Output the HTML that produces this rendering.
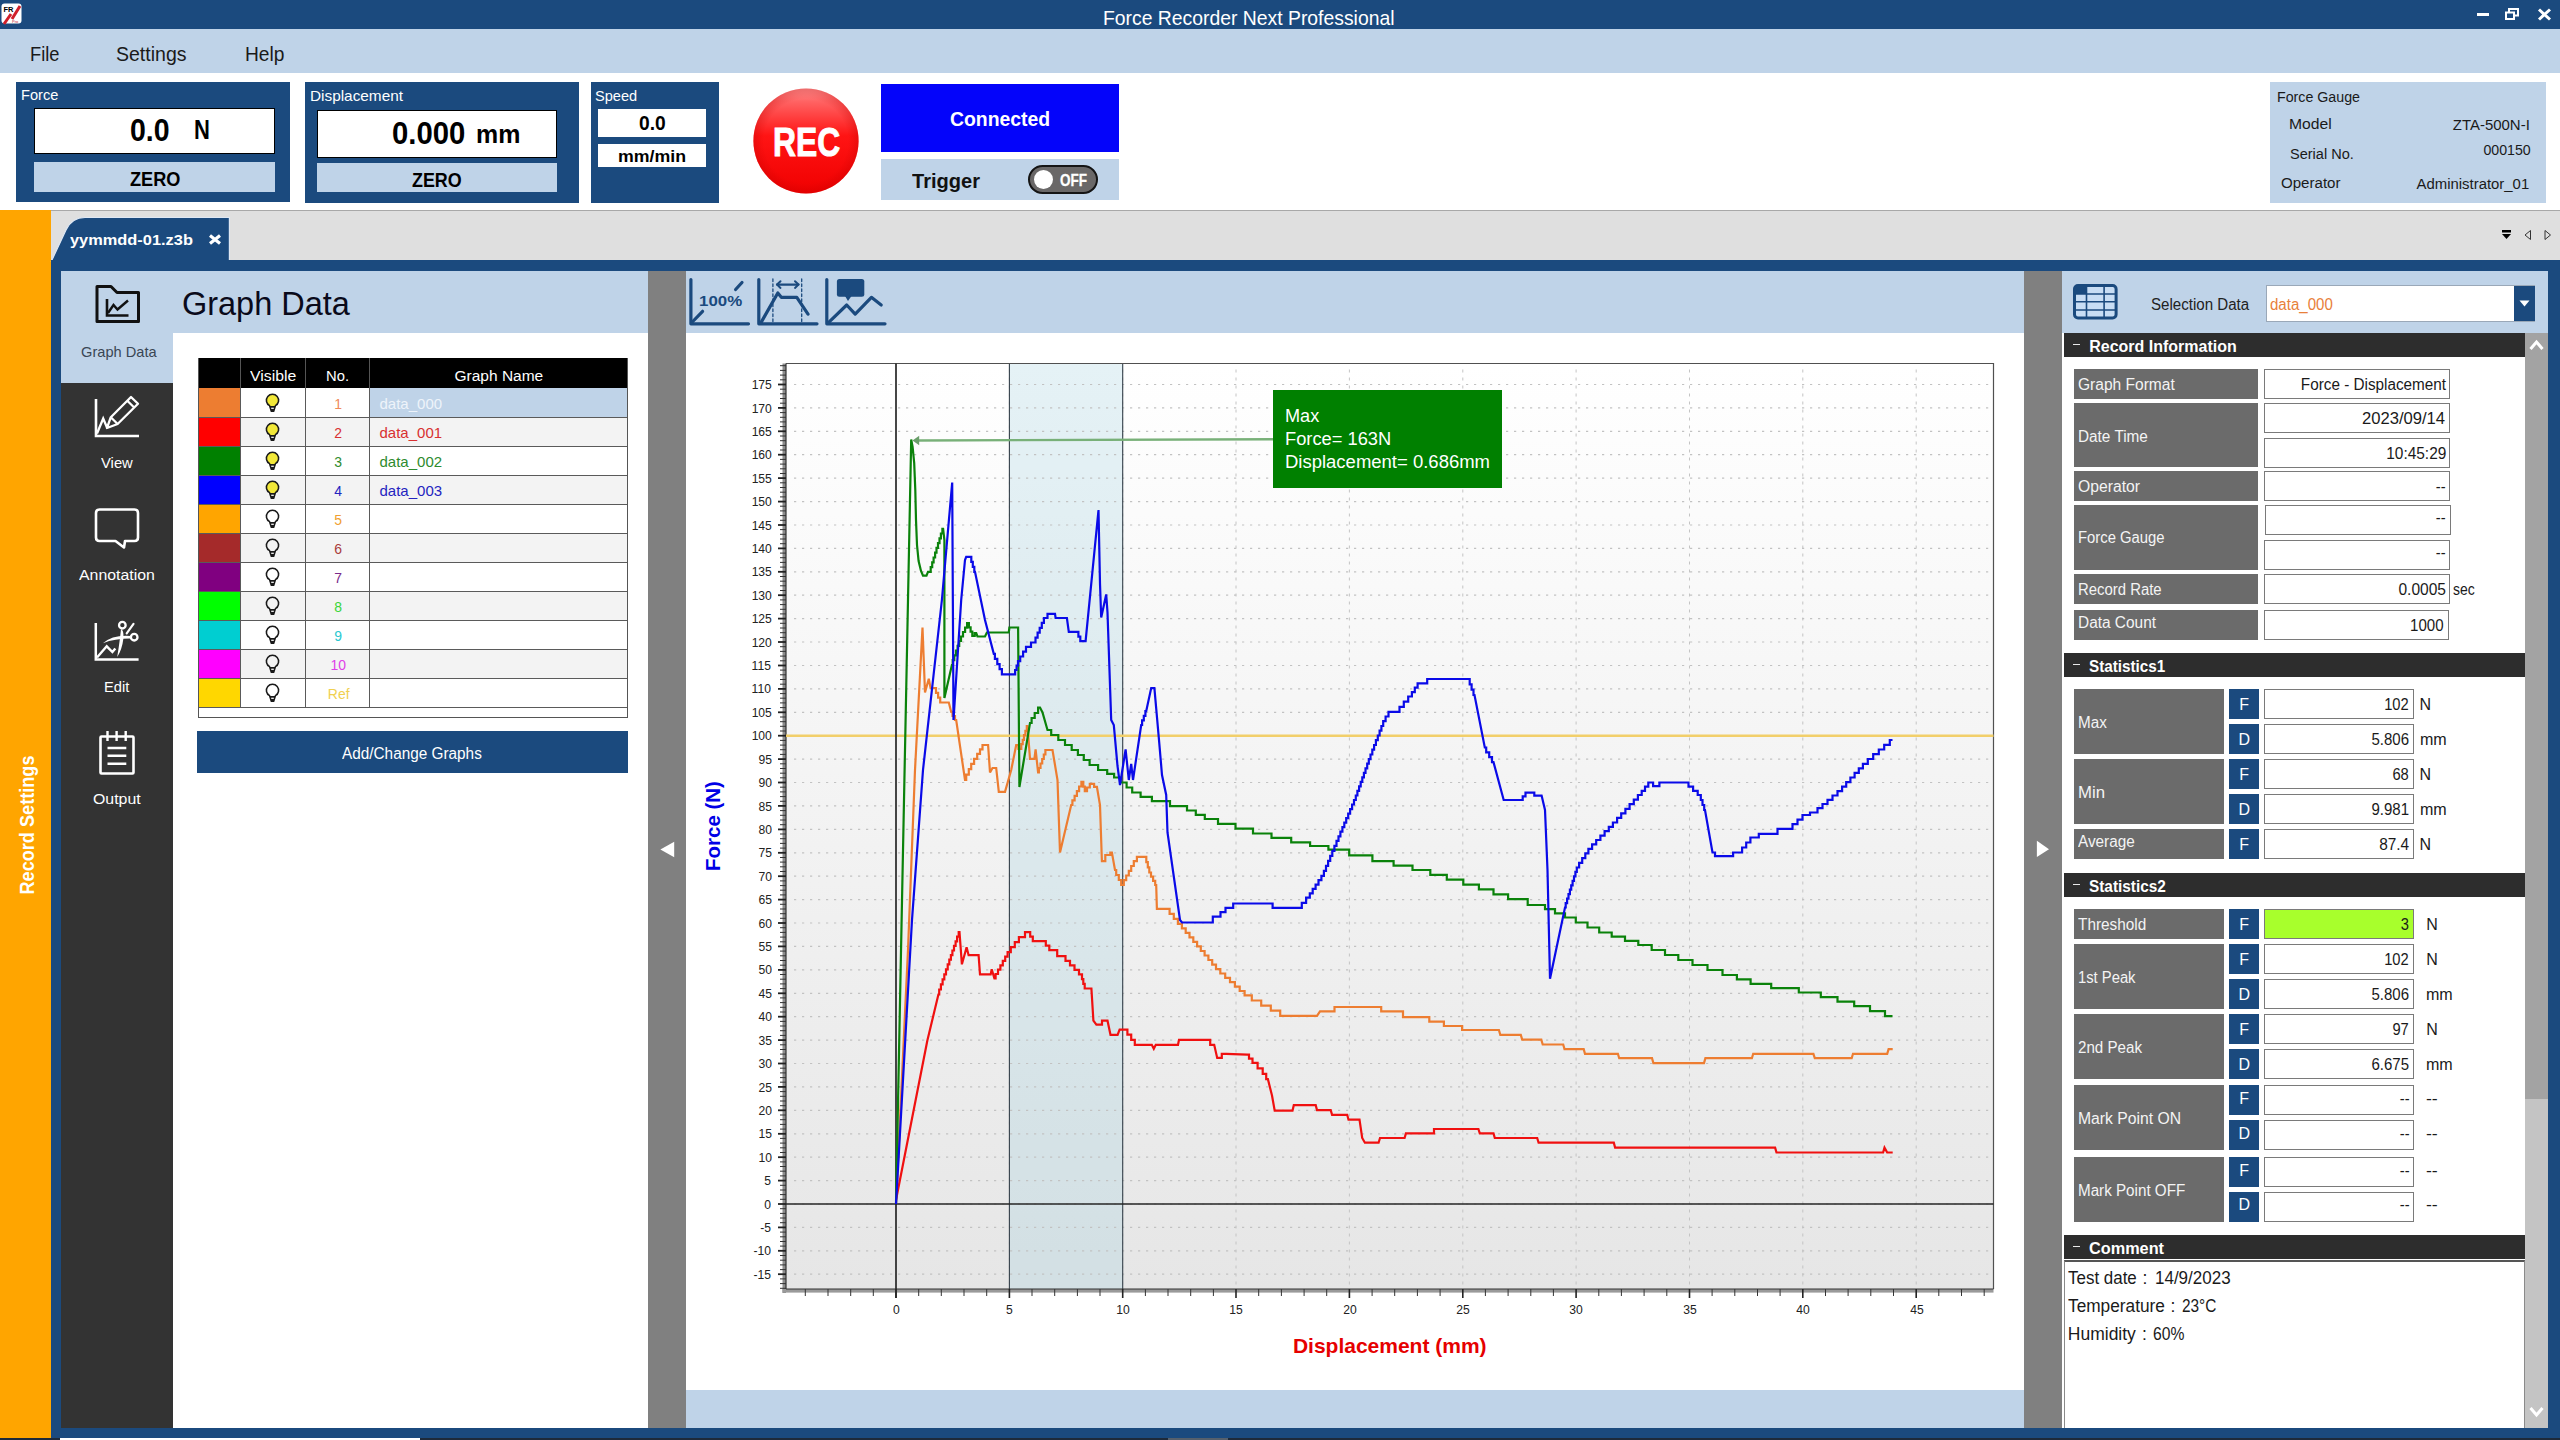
<!DOCTYPE html>
<html><head><meta charset="utf-8">
<style>
*{margin:0;padding:0;box-sizing:border-box}
html,body{width:2560px;height:1440px;overflow:hidden;background:#fff;font-family:"Liberation Sans",sans-serif;color:#000}
.a{position:absolute}
.t{position:absolute;white-space:nowrap}
svg{position:absolute;overflow:visible}
</style></head><body>
<div class="a" style="left:0px;top:0px;width:2560px;height:29px;background:#1b4a7e;"></div>
<div class="a" style="left:0px;top:29px;width:2560px;height:44px;background:#bfd3e8;"></div>
<div class="a" style="left:51px;top:211px;width:2509px;height:49px;background:#dfdfdf;"></div>
<div class="a" style="left:0px;top:210px;width:2560px;height:1px;background:#a8a8a8;"></div>
<div class="a" style="left:0px;top:210px;width:51px;height:1230px;background:#ffa500;"></div>
<div class="a" style="left:51px;top:260px;width:2509px;height:1178px;background:#1b4a7e;"></div>
<div class="a" style="left:60px;top:1438px;width:360px;height:2px;background:#ffffff;"></div>
<div class="a" style="left:420px;top:1438px;width:2140px;height:2px;background:#1e2a3a;"></div>
<div class="a" style="left:0px;top:1438px;width:60px;height:2px;background:#1e2a3a;"></div>
<div class="a" style="left:1168px;top:1438px;width:60px;height:2px;background:#56606c;"></div>
<div class="a" style="left:61px;top:271px;width:112px;height:1157px;background:#333333;"></div>
<div class="a" style="left:61px;top:271px;width:112px;height:112px;background:#bfd3e8;"></div>
<div class="a" style="left:173px;top:271px;width:475px;height:62px;background:#bfd3e8;"></div>
<div class="a" style="left:173px;top:333px;width:475px;height:1095px;background:#fff;"></div>
<div class="a" style="left:648px;top:271px;width:38px;height:1157px;background:#808080;"></div>
<div class="a" style="left:686px;top:271px;width:1338px;height:62px;background:#bfd3e8;"></div>
<div class="a" style="left:686px;top:333px;width:1338px;height:1057px;background:#fff;"></div>
<div class="a" style="left:686px;top:1390px;width:1338px;height:38px;background:#bfd3e8;"></div>
<div class="a" style="left:2024px;top:271px;width:38px;height:1157px;background:#808080;"></div>
<div class="a" style="left:2062px;top:271px;width:486px;height:62px;background:#bfd3e8;"></div>
<div class="a" style="left:2062px;top:333px;width:486px;height:1095px;background:#fff;"></div>
<div class="t" style="left:1102.80px;top:7.12px;font-size:21px;line-height:21px;color:#fff;transform:scaleX(0.9216);transform-origin:left;">Force Recorder Next Professional</div>
<div class="a" style="left:2477px;top:13px;width:12px;height:3px;background:#fff;"></div>
<svg style="left:2505px;top:8px" width="14" height="12" viewBox="0 0 14 12"><rect x="1" y="4.5" width="8" height="6.5" fill="none" stroke="#fff" stroke-width="2"/><path d="M4 4.5V1h9v6.5H9" fill="none" stroke="#fff" stroke-width="2"/></svg>
<svg style="left:2538px;top:9px" width="13" height="11" viewBox="0 0 13 11"><path d="M1 0.5L12 10.5M12 0.5L1 10.5" stroke="#fff" stroke-width="3"/></svg>
<svg style="left:1px;top:3px" width="21" height="22" viewBox="0 0 21 22"><rect x="0.5" y="0.5" width="20" height="20" rx="3" fill="#fff"/><text x="2.5" y="9" font-size="7.5" font-weight="700" font-family="Liberation Sans">FR</text><path d="M3 21L10 11M11 16L19 3" stroke="#d0202a" stroke-width="3"/><text x="11" y="20" font-size="4" fill="#c02030" font-family="Liberation Sans">Pro</text></svg>
<div class="t" style="left:29.50px;top:43.67px;font-size:20px;line-height:20px;color:#1a1a1a;transform:scaleX(0.9154);transform-origin:left;">File</div>
<div class="t" style="left:115.50px;top:43.67px;font-size:20px;line-height:20px;color:#1a1a1a;transform:scaleX(0.9756);transform-origin:left;">Settings</div>
<div class="t" style="left:244.50px;top:43.67px;font-size:20px;line-height:20px;color:#1a1a1a;transform:scaleX(0.9603);transform-origin:left;">Help</div>
<div class="a" style="left:16px;top:82px;width:274px;height:120px;background:#1b4a7e;"></div>
<div class="t" style="left:20.80px;top:86.60px;font-size:15px;line-height:15px;color:#fff;transform:scaleX(0.9728);transform-origin:left;">Force</div>
<div class="a" style="left:34px;top:108px;width:241px;height:46px;background:#fff;border:1.5px solid #000;"></div>
<div class="t" style="left:130.10px;top:114.78px;font-size:30.5px;line-height:30.5px;font-weight:700;color:#000;transform:scaleX(0.9340);transform-origin:left;">0.0</div>
<div class="t" style="left:194.40px;top:116.84px;font-size:27px;line-height:27px;font-weight:700;color:#000;transform:scaleX(0.8154);transform-origin:left;">N</div>
<div class="a" style="left:34px;top:162px;width:241px;height:30px;background:#bfd3e8;"></div>
<div class="t" style="left:129.50px;top:169.99px;font-size:19.5px;line-height:19.5px;font-weight:700;color:#000;transform:scaleX(0.9304);transform-origin:left;">ZERO</div>
<div class="a" style="left:305px;top:82px;width:274px;height:121px;background:#1b4a7e;"></div>
<div class="t" style="left:310.00px;top:87.80px;font-size:15px;line-height:15px;color:#fff;transform:scaleX(1.0234);transform-origin:left;">Displacement</div>
<div class="a" style="left:317px;top:110px;width:240px;height:48px;background:#fff;border:1.5px solid #000;"></div>
<div class="t" style="left:391.90px;top:117.68px;font-size:30.5px;line-height:30.5px;font-weight:700;color:#000;transform:scaleX(0.9604);transform-origin:left;">0.000</div>
<div class="t" style="left:476.10px;top:121.07px;font-size:26.5px;line-height:26.5px;font-weight:700;color:#000;transform:scaleX(0.9400);transform-origin:left;">mm</div>
<div class="a" style="left:317px;top:163px;width:240px;height:29px;background:#bfd3e8;"></div>
<div class="t" style="left:411.60px;top:170.69px;font-size:19.5px;line-height:19.5px;font-weight:700;color:#000;transform:scaleX(0.9175);transform-origin:left;">ZERO</div>
<div class="a" style="left:591px;top:82px;width:128px;height:121px;background:#1b4a7e;"></div>
<div class="t" style="left:594.60px;top:87.60px;font-size:15px;line-height:15px;color:#fff;transform:scaleX(0.9729);transform-origin:left;">Speed</div>
<div class="a" style="left:598px;top:109px;width:108px;height:28px;background:#fff;"></div>
<div class="t" style="left:638.60px;top:113.59px;font-size:19.5px;line-height:19.5px;font-weight:700;color:#000;transform:scaleX(0.9850);transform-origin:left;">0.0</div>
<div class="a" style="left:598px;top:144px;width:108px;height:23px;background:#fff;"></div>
<div class="t" style="left:617.50px;top:147.53px;font-size:16.5px;line-height:16.5px;font-weight:700;color:#000;transform:scaleX(1.0749);transform-origin:left;">mm/min</div>
<svg style="left:752px;top:86px" width="108" height="110" viewBox="0 0 108 110">
<defs><linearGradient id="rg" x1="0" y1="0" x2="0" y2="1"><stop offset="0" stop-color="#ff9a9a"/><stop offset="0.12" stop-color="#ff6464"/><stop offset="0.45" stop-color="#ff1414"/><stop offset="1" stop-color="#f00000"/></linearGradient>
<radialGradient id="edge" cx="0.5" cy="0.5" r="0.5"><stop offset="0.8" stop-color="#c00000" stop-opacity="0"/><stop offset="1" stop-color="#c00000" stop-opacity="0.3"/></radialGradient></defs>
<circle cx="54" cy="55" r="52.6" fill="url(#rg)"/>
<circle cx="54" cy="55" r="52.6" fill="url(#edge)"/>
</svg>
<div class="t" style="left:772.50px;top:122.14px;font-size:40px;line-height:40px;font-weight:700;color:#fff;transform:scaleX(0.7945);transform-origin:left;-webkit-text-stroke:1px #fff;">REC</div>
<div class="a" style="left:881px;top:84px;width:238px;height:68px;background:#0404fa;"></div>
<div class="t" style="left:949.70px;top:109.47px;font-size:20px;line-height:20px;font-weight:700;color:#fff;transform:scaleX(0.9696);transform-origin:left;">Connected</div>
<div class="a" style="left:881px;top:159px;width:238px;height:41px;background:#bfd3e8;"></div>
<div class="t" style="left:912.00px;top:170.67px;font-size:20px;line-height:20px;font-weight:700;color:#111;transform:scaleX(1.0031);transform-origin:left;">Trigger</div>
<div class="a" style="left:1028px;top:165px;width:70px;height:29px;background:#6a6868;border:2.5px solid #151515;border-radius:15px;"></div>
<div class="a" style="left:1034px;top:170px;width:19.2px;height:19.2px;border-radius:50%;background:#fff"></div>
<div class="t" style="left:1060.20px;top:172.43px;font-size:16.5px;line-height:16.5px;font-weight:700;color:#fff;transform:scaleX(0.8184);transform-origin:left;-webkit-text-stroke:0.3px #fff;">OFF</div>
<div class="a" style="left:2270px;top:82px;width:276px;height:121px;background:#bfd3e8;"></div>
<div class="t" style="left:2277.40px;top:88.58px;font-size:15.5px;line-height:15.5px;color:#1a1a1a;transform:scaleX(0.9175);transform-origin:left;">Force Gauge</div>
<div class="t" style="left:2288.60px;top:116.48px;font-size:15.5px;line-height:15.5px;color:#1a1a1a;transform:scaleX(1.0114);transform-origin:left;">Model</div>
<div class="t" style="left:2449.59px;top:117.28px;font-size:15.5px;line-height:15.5px;color:#1a1a1a;transform:scaleX(0.9648);transform-origin:right;">ZTA-500N-I</div>
<div class="t" style="left:2290.40px;top:146.28px;font-size:15.5px;line-height:15.5px;color:#1a1a1a;transform:scaleX(0.9375);transform-origin:left;">Serial No.</div>
<div class="t" style="left:2478.78px;top:142.08px;font-size:15.5px;line-height:15.5px;color:#1a1a1a;transform:scaleX(0.9145);transform-origin:right;">000150</div>
<div class="t" style="left:2280.50px;top:175.08px;font-size:15.5px;line-height:15.5px;color:#1a1a1a;transform:scaleX(0.9727);transform-origin:left;">Operator</div>
<div class="t" style="left:2411.83px;top:176.08px;font-size:15.5px;line-height:15.5px;color:#1a1a1a;transform:scaleX(0.9610);transform-origin:right;">Administrator_01</div>
<svg style="left:51px;top:216px" width="180" height="46" viewBox="0 0 180 46"><path d="M0.5 45 L15 14 Q21 1.5 34 1.5 L178.4 1.5 L178.4 45 Z" fill="#1b4a7e" stroke="#dfe8f4" stroke-width="1.2"/><rect x="0" y="44" width="180" height="2" fill="#1b4a7e"/></svg>
<div class="t" style="left:70.00px;top:232.96px;font-size:14.7px;line-height:14.7px;font-weight:700;color:#fff;transform:scaleX(1.1153);transform-origin:left;">yymmdd-01.z3b</div>
<svg style="left:208px;top:234px" width="14" height="11" viewBox="0 0 14 11"><path d="M2 1.5L12 9.5M12 1.5L2 9.5" stroke="#fff" stroke-width="3.2"/></svg>
<svg style="left:2500px;top:229px" width="12" height="12" viewBox="0 0 12 12"><rect x="2" y="1" width="9" height="2.5" fill="#000"/><path d="M2 5H11L6.5 10Z" fill="#000"/></svg>
<svg style="left:2522px;top:229px" width="10" height="12" viewBox="0 0 10 12"><path d="M8.5 1.5V10.5L3 6Z" fill="none" stroke="#333" stroke-width="1"/></svg>
<svg style="left:2543px;top:229px" width="10" height="12" viewBox="0 0 10 12"><path d="M2 1.5V10.5L7.5 6Z" fill="none" stroke="#333" stroke-width="1"/></svg>
<svg style="left:90px;top:282px" width="56" height="46" viewBox="90 282 56 46">
<path d="M97 286.5 H111 L117 292.5 H138.5 V321.5 H97 Z" fill="none" stroke="#111" stroke-width="3" stroke-linejoin="round"/>
<path d="M107 299 V315.5 H128.5" fill="none" stroke="#111" stroke-width="2.6"/>
<path d="M108 313 L113.5 305 L117.5 309.5 L128 300.5" fill="none" stroke="#111" stroke-width="2.4"/>
</svg>
<div class="t" style="left:80.60px;top:343.90px;font-size:15px;line-height:15px;color:#3a4654;transform:scaleX(0.9750);transform-origin:left;">Graph Data</div>
<svg style="left:90px;top:395px" width="56" height="46" viewBox="90 395 56 46">
<path d="M96 399 V436 H139" fill="none" stroke="#fff" stroke-width="2.6"/>
<path d="M97 433.5 L103.2 418.5 L107.2 428" fill="none" stroke="#fff" stroke-width="2.3"/>
<path d="M107 428 L110.8 417.2 L131 397 L138 403.8 L117.6 424 Z M110.8 417.2 L117.6 424 M127.3 400.7 L134.2 407.5" fill="none" stroke="#fff" stroke-width="2.3" stroke-linejoin="round"/>
</svg>
<div class="t" style="left:101.00px;top:454.88px;font-size:15.5px;line-height:15.5px;color:#fff;transform:scaleX(0.9545);transform-origin:left;">View</div>
<svg style="left:90px;top:504px" width="56" height="48" viewBox="90 504 56 48">
<path d="M99.5 509.5 H134.5 Q138 509.5 138 513 V537.5 Q138 541 134.5 541 H125 L124 547.5 L115.5 541 H99.5 Q96 541 96 537.5 V513 Q96 509.5 99.5 509.5 Z" fill="none" stroke="#fff" stroke-width="2.6" stroke-linejoin="round"/>
</svg>
<div class="t" style="left:79.40px;top:567.08px;font-size:15.5px;line-height:15.5px;color:#fff;transform:scaleX(1.0227);transform-origin:left;">Annotation</div>
<svg style="left:90px;top:618px" width="56" height="46" viewBox="90 618 56 46">
<path d="M95.8 623 V659.5 H138.6" fill="none" stroke="#fff" stroke-width="2.5"/>
<path d="M97 657.5 L106.7 646.3 L112.4 652 L115.3 648.4" fill="none" stroke="#fff" stroke-width="2.4" stroke-linejoin="miter"/>
<circle cx="122.35" cy="625.2" r="3.3" fill="none" stroke="#fff" stroke-width="2.3"/>
<circle cx="134.2" cy="637.2" r="3.3" fill="none" stroke="#fff" stroke-width="2.3"/>
<path d="M102.9 643.2 Q113 634.5 131 636 L131 638.6 Q115 638.5 102.9 643.2 Z" fill="#fff"/>
<path d="M121 629 Q123.8 630 123.5 638 Q122 650 117.2 656.9 Q119 646 120 638 Z" fill="#fff"/>
<path d="M126.7 633.3 L133.5 623.9" stroke="#fff" stroke-width="2.2" stroke-linecap="round"/>
</svg>
<div class="t" style="left:104.40px;top:678.68px;font-size:15.5px;line-height:15.5px;color:#fff;transform:scaleX(0.9472);transform-origin:left;">Edit</div>
<svg style="left:90px;top:728px" width="56" height="50" viewBox="90 728 56 50">
<rect x="100.5" y="736.5" width="33" height="37" rx="1" fill="none" stroke="#fff" stroke-width="2.6"/>
<path d="M107.5 731V741M116.6 731V741M125.7 731V741" stroke="#fff" stroke-width="2.4"/>
<path d="M107.5 748H126.3M107.5 755.8H126.3M107.5 763.7H126.3" stroke="#fff" stroke-width="2.4"/>
</svg>
<div class="t" style="left:93.30px;top:791.38px;font-size:15.5px;line-height:15.5px;color:#fff;transform:scaleX(1.0251);transform-origin:left;">Output</div>
<div class="t" style="left:28px;top:824.6px;font-size:19.5px;line-height:19.5px;font-weight:700;color:#fff;transform:translate(-50%,-50%) rotate(-90deg) scaleX(0.93);">Record Settings</div>
<div class="t" style="left:181.90px;top:285.82px;font-size:34px;line-height:34px;color:#0a0a1a;transform:scaleX(0.9547);transform-origin:left;">Graph Data</div>
<div class="a" style="left:198px;top:358px;width:430px;height:30px;background:#000;"></div>
<div class="a" style="left:198px;top:388px;width:430px;height:330px;background:#fff;border:1px solid #555;border-top:none;"></div>
<div class="a" style="left:199px;top:388px;width:428px;height:29px;background:#ffffff;"></div>
<div class="a" style="left:199px;top:388px;width:41px;height:29px;background:#ed7d31;"></div>
<div class="a" style="left:370px;top:388px;width:257px;height:29px;background:#bfd3e8;"></div>
<div class="a" style="left:199px;top:417px;width:428px;height:29px;background:#f3f3f3;"></div>
<div class="a" style="left:199px;top:417px;width:41px;height:29px;background:#ff0000;"></div>
<div class="a" style="left:199px;top:446px;width:428px;height:29px;background:#ffffff;"></div>
<div class="a" style="left:199px;top:446px;width:41px;height:29px;background:#008000;"></div>
<div class="a" style="left:199px;top:475px;width:428px;height:29px;background:#f3f3f3;"></div>
<div class="a" style="left:199px;top:475px;width:41px;height:29px;background:#0000ff;"></div>
<div class="a" style="left:199px;top:504px;width:428px;height:29px;background:#ffffff;"></div>
<div class="a" style="left:199px;top:504px;width:41px;height:29px;background:#ffa500;"></div>
<div class="a" style="left:199px;top:533px;width:428px;height:29px;background:#f3f3f3;"></div>
<div class="a" style="left:199px;top:533px;width:41px;height:29px;background:#a52a2a;"></div>
<div class="a" style="left:199px;top:562px;width:428px;height:29px;background:#ffffff;"></div>
<div class="a" style="left:199px;top:562px;width:41px;height:29px;background:#800080;"></div>
<div class="a" style="left:199px;top:591px;width:428px;height:29px;background:#f3f3f3;"></div>
<div class="a" style="left:199px;top:591px;width:41px;height:29px;background:#00ff00;"></div>
<div class="a" style="left:199px;top:620px;width:428px;height:29px;background:#ffffff;"></div>
<div class="a" style="left:199px;top:620px;width:41px;height:29px;background:#00ced1;"></div>
<div class="a" style="left:199px;top:649px;width:428px;height:29px;background:#f3f3f3;"></div>
<div class="a" style="left:199px;top:649px;width:41px;height:29px;background:#ff00ff;"></div>
<div class="a" style="left:199px;top:678px;width:428px;height:29px;background:#ffffff;"></div>
<div class="a" style="left:199px;top:678px;width:41px;height:29px;background:#ffd700;"></div>
<div class="a" style="left:198px;top:417px;width:430px;height:1px;background:#5a5a5a;"></div>
<div class="a" style="left:198px;top:446px;width:430px;height:1px;background:#5a5a5a;"></div>
<div class="a" style="left:198px;top:475px;width:430px;height:1px;background:#5a5a5a;"></div>
<div class="a" style="left:198px;top:504px;width:430px;height:1px;background:#5a5a5a;"></div>
<div class="a" style="left:198px;top:533px;width:430px;height:1px;background:#5a5a5a;"></div>
<div class="a" style="left:198px;top:562px;width:430px;height:1px;background:#5a5a5a;"></div>
<div class="a" style="left:198px;top:591px;width:430px;height:1px;background:#5a5a5a;"></div>
<div class="a" style="left:198px;top:620px;width:430px;height:1px;background:#5a5a5a;"></div>
<div class="a" style="left:198px;top:649px;width:430px;height:1px;background:#5a5a5a;"></div>
<div class="a" style="left:198px;top:678px;width:430px;height:1px;background:#5a5a5a;"></div>
<div class="a" style="left:198px;top:707px;width:430px;height:1px;background:#5a5a5a;"></div>
<div class="a" style="left:240px;top:358px;width:1px;height:30px;background:#555;"></div>
<div class="a" style="left:240px;top:388px;width:1px;height:319px;background:#5a5a5a;"></div>
<div class="a" style="left:305px;top:358px;width:1px;height:30px;background:#555;"></div>
<div class="a" style="left:305px;top:388px;width:1px;height:319px;background:#5a5a5a;"></div>
<div class="a" style="left:369px;top:358px;width:1px;height:30px;background:#555;"></div>
<div class="a" style="left:369px;top:388px;width:1px;height:319px;background:#5a5a5a;"></div>
<div class="a" style="left:198px;top:358px;width:1px;height:360px;background:#555;"></div>
<div class="a" style="left:627px;top:358px;width:1px;height:360px;background:#555;"></div>
<div class="a" style="left:198px;top:717px;width:430px;height:1px;background:#555;"></div>
<div class="t" style="left:250.00px;top:367.68px;font-size:15.5px;line-height:15.5px;color:#fff;transform:scaleX(1.0192);transform-origin:left;">Visible</div>
<div class="t" style="left:325.60px;top:367.68px;font-size:15.5px;line-height:15.5px;color:#fff;transform:scaleX(0.9535);transform-origin:left;">No.</div>
<div class="t" style="left:454.50px;top:367.68px;font-size:15.5px;line-height:15.5px;color:#fff;">Graph Name</div>
<svg style="left:260.2px;top:388px" width="25" height="29" viewBox="-12.5 -12.5 25 29"><path d="M-2.9 5.2 A6.1 6.1 0 1 1 2.9 5.2 L1.2 10.8 H-1.2 Z" fill="#f2e838" stroke="#1a1a1a" stroke-width="1.5" stroke-linejoin="round"/><path d="M-2.9 5.4 H2.9 L1.2 10.8 H-1.2 Z" fill="#1a1a1a"/><rect x="-1.3" y="7.2" width="2.6" height="1.2" fill="#fff"/></svg>
<div class="t" style="left:334.33px;top:395.80px;font-size:15px;line-height:15px;color:#ef8a5a;transform:scaleX(0.9300);transform-origin:center;">1</div>
<div class="t" style="left:379.50px;top:395.80px;font-size:15px;line-height:15px;color:#eef3fa;">data_000</div>
<svg style="left:260.2px;top:417px" width="25" height="29" viewBox="-12.5 -12.5 25 29"><path d="M-2.9 5.2 A6.1 6.1 0 1 1 2.9 5.2 L1.2 10.8 H-1.2 Z" fill="#f2e838" stroke="#1a1a1a" stroke-width="1.5" stroke-linejoin="round"/><path d="M-2.9 5.4 H2.9 L1.2 10.8 H-1.2 Z" fill="#1a1a1a"/><rect x="-1.3" y="7.2" width="2.6" height="1.2" fill="#fff"/></svg>
<div class="t" style="left:334.33px;top:424.80px;font-size:15px;line-height:15px;color:#d83030;transform:scaleX(0.9300);transform-origin:center;">2</div>
<div class="t" style="left:379.50px;top:424.80px;font-size:15px;line-height:15px;color:#d83030;">data_001</div>
<svg style="left:260.2px;top:446px" width="25" height="29" viewBox="-12.5 -12.5 25 29"><path d="M-2.9 5.2 A6.1 6.1 0 1 1 2.9 5.2 L1.2 10.8 H-1.2 Z" fill="#f2e838" stroke="#1a1a1a" stroke-width="1.5" stroke-linejoin="round"/><path d="M-2.9 5.4 H2.9 L1.2 10.8 H-1.2 Z" fill="#1a1a1a"/><rect x="-1.3" y="7.2" width="2.6" height="1.2" fill="#fff"/></svg>
<div class="t" style="left:334.33px;top:453.80px;font-size:15px;line-height:15px;color:#2e8b2e;transform:scaleX(0.9300);transform-origin:center;">3</div>
<div class="t" style="left:379.50px;top:453.80px;font-size:15px;line-height:15px;color:#2e8b2e;">data_002</div>
<svg style="left:260.2px;top:475px" width="25" height="29" viewBox="-12.5 -12.5 25 29"><path d="M-2.9 5.2 A6.1 6.1 0 1 1 2.9 5.2 L1.2 10.8 H-1.2 Z" fill="#f2e838" stroke="#1a1a1a" stroke-width="1.5" stroke-linejoin="round"/><path d="M-2.9 5.4 H2.9 L1.2 10.8 H-1.2 Z" fill="#1a1a1a"/><rect x="-1.3" y="7.2" width="2.6" height="1.2" fill="#fff"/></svg>
<div class="t" style="left:334.33px;top:482.80px;font-size:15px;line-height:15px;color:#2424c0;transform:scaleX(0.9300);transform-origin:center;">4</div>
<div class="t" style="left:379.50px;top:482.80px;font-size:15px;line-height:15px;color:#2424c0;">data_003</div>
<svg style="left:260.2px;top:504px" width="25" height="29" viewBox="-12.5 -12.5 25 29"><path d="M-2.9 5.2 A6.1 6.1 0 1 1 2.9 5.2 L1.2 10.8 H-1.2 Z" fill="none" stroke="#1a1a1a" stroke-width="1.5" stroke-linejoin="round"/><path d="M-2.9 5.4 H2.9 L1.2 10.8 H-1.2 Z" fill="#1a1a1a"/><rect x="-1.3" y="7.2" width="2.6" height="1.2" fill="#fff"/></svg>
<div class="t" style="left:334.33px;top:511.80px;font-size:15px;line-height:15px;color:#f0a030;transform:scaleX(0.9300);transform-origin:center;">5</div>
<svg style="left:260.2px;top:533px" width="25" height="29" viewBox="-12.5 -12.5 25 29"><path d="M-2.9 5.2 A6.1 6.1 0 1 1 2.9 5.2 L1.2 10.8 H-1.2 Z" fill="none" stroke="#1a1a1a" stroke-width="1.5" stroke-linejoin="round"/><path d="M-2.9 5.4 H2.9 L1.2 10.8 H-1.2 Z" fill="#1a1a1a"/><rect x="-1.3" y="7.2" width="2.6" height="1.2" fill="#fff"/></svg>
<div class="t" style="left:334.33px;top:540.80px;font-size:15px;line-height:15px;color:#a83a3a;transform:scaleX(0.9300);transform-origin:center;">6</div>
<svg style="left:260.2px;top:562px" width="25" height="29" viewBox="-12.5 -12.5 25 29"><path d="M-2.9 5.2 A6.1 6.1 0 1 1 2.9 5.2 L1.2 10.8 H-1.2 Z" fill="none" stroke="#1a1a1a" stroke-width="1.5" stroke-linejoin="round"/><path d="M-2.9 5.4 H2.9 L1.2 10.8 H-1.2 Z" fill="#1a1a1a"/><rect x="-1.3" y="7.2" width="2.6" height="1.2" fill="#fff"/></svg>
<div class="t" style="left:334.33px;top:569.80px;font-size:15px;line-height:15px;color:#7a2a8a;transform:scaleX(0.9300);transform-origin:center;">7</div>
<svg style="left:260.2px;top:591px" width="25" height="29" viewBox="-12.5 -12.5 25 29"><path d="M-2.9 5.2 A6.1 6.1 0 1 1 2.9 5.2 L1.2 10.8 H-1.2 Z" fill="none" stroke="#1a1a1a" stroke-width="1.5" stroke-linejoin="round"/><path d="M-2.9 5.4 H2.9 L1.2 10.8 H-1.2 Z" fill="#1a1a1a"/><rect x="-1.3" y="7.2" width="2.6" height="1.2" fill="#fff"/></svg>
<div class="t" style="left:334.33px;top:598.80px;font-size:15px;line-height:15px;color:#3ad63a;transform:scaleX(0.9300);transform-origin:center;">8</div>
<svg style="left:260.2px;top:620px" width="25" height="29" viewBox="-12.5 -12.5 25 29"><path d="M-2.9 5.2 A6.1 6.1 0 1 1 2.9 5.2 L1.2 10.8 H-1.2 Z" fill="none" stroke="#1a1a1a" stroke-width="1.5" stroke-linejoin="round"/><path d="M-2.9 5.4 H2.9 L1.2 10.8 H-1.2 Z" fill="#1a1a1a"/><rect x="-1.3" y="7.2" width="2.6" height="1.2" fill="#fff"/></svg>
<div class="t" style="left:334.33px;top:627.80px;font-size:15px;line-height:15px;color:#2ac8d0;transform:scaleX(0.9300);transform-origin:center;">9</div>
<svg style="left:260.2px;top:649px" width="25" height="29" viewBox="-12.5 -12.5 25 29"><path d="M-2.9 5.2 A6.1 6.1 0 1 1 2.9 5.2 L1.2 10.8 H-1.2 Z" fill="none" stroke="#1a1a1a" stroke-width="1.5" stroke-linejoin="round"/><path d="M-2.9 5.4 H2.9 L1.2 10.8 H-1.2 Z" fill="#1a1a1a"/><rect x="-1.3" y="7.2" width="2.6" height="1.2" fill="#fff"/></svg>
<div class="t" style="left:330.16px;top:656.80px;font-size:15px;line-height:15px;color:#e040e8;transform:scaleX(0.9300);transform-origin:center;">10</div>
<svg style="left:260.2px;top:678px" width="25" height="29" viewBox="-12.5 -12.5 25 29"><path d="M-2.9 5.2 A6.1 6.1 0 1 1 2.9 5.2 L1.2 10.8 H-1.2 Z" fill="none" stroke="#1a1a1a" stroke-width="1.5" stroke-linejoin="round"/><path d="M-2.9 5.4 H2.9 L1.2 10.8 H-1.2 Z" fill="#1a1a1a"/><rect x="-1.3" y="7.2" width="2.6" height="1.2" fill="#fff"/></svg>
<div class="t" style="left:326.83px;top:685.80px;font-size:15px;line-height:15px;color:#f0d050;transform:scaleX(0.9300);transform-origin:center;">Ref</div>
<div class="a" style="left:197px;top:731px;width:431px;height:42px;background:#1b4a7e;"></div>
<div class="t" style="left:342.40px;top:746.36px;font-size:16px;line-height:16px;color:#fff;transform:scaleX(0.9583);transform-origin:left;">Add/Change Graphs</div>
<svg style="left:686px;top:271px" width="220" height="62" viewBox="686 271 220 62">
<g fill="none" stroke="#1b4a7e" stroke-linecap="round" stroke-linejoin="round">
<path d="M690.9 279.5 V323.8 H748.5" stroke-width="3.2"/>
<path d="M691.8 322.5 L702.6 311.3" stroke-width="3.2"/>
<path d="M735.6 289.5 L742 282.5" stroke-width="3.2"/>
<path d="M758.8 279.5 V323.8 H817" stroke-width="3.2"/>
<path d="M761 322.6 L777.8 293 L781.3 297.3 H796.8 L808 314.1" stroke-width="3.2"/>
<path d="M772.9 279 V323M801.7 279 V323" stroke-width="1.3" stroke-dasharray="2.6 2.4"/>
<path d="M777 284.6 H798.5" stroke-width="2.2"/>
<path d="M780.5 281.3 L777 284.6 L780.5 287.9 M795 281.3 L798.5 284.6 L795 287.9" stroke-width="2"/>
<path d="M826.8 279.5 V323.8 H885" stroke-width="3.2"/>
<path d="M829.2 321.9 L846.7 305 L855.2 314.1 L871.4 297.3 L881.2 305" stroke-width="3.2"/>
</g>
<rect x="836.9" y="279" width="27.4" height="17.8" rx="2.5" fill="#1b4a7e"/>
<path d="M845 296 L848 301 L851.5 296Z" fill="#1b4a7e"/>
</svg>
<div class="t" style="left:698.80px;top:294.16px;font-size:14.7px;line-height:14.7px;font-weight:700;color:#1b4a7e;transform:scaleX(1.1490);transform-origin:left;">100%</div>
<div class="a" style="left:786px;top:363.5px;width:1207.5px;height:925.5px;background:linear-gradient(#ffffff,#e6e6e6)"></div>
<div class="a" style="left:1009.4px;top:363.5px;width:113.4px;height:925.5px;background:rgba(160,208,222,0.27)"></div>
<svg style="left:0;top:0" width="2560" height="1440" viewBox="0 0 2560 1440">
<line x1="794" y1="1274.2" x2="1989.5" y2="1274.2" stroke="#c2c2c2" stroke-width="1.2" stroke-dasharray="2.2 5.8"/>
<line x1="794" y1="1250.8" x2="1989.5" y2="1250.8" stroke="#c2c2c2" stroke-width="1.2" stroke-dasharray="2.2 5.8"/>
<line x1="794" y1="1227.4" x2="1989.5" y2="1227.4" stroke="#c2c2c2" stroke-width="1.2" stroke-dasharray="2.2 5.8"/>
<line x1="794" y1="1204.0" x2="1989.5" y2="1204.0" stroke="#c2c2c2" stroke-width="1.2" stroke-dasharray="2.2 5.8"/>
<line x1="794" y1="1180.6" x2="1989.5" y2="1180.6" stroke="#c2c2c2" stroke-width="1.2" stroke-dasharray="2.2 5.8"/>
<line x1="794" y1="1157.2" x2="1989.5" y2="1157.2" stroke="#c2c2c2" stroke-width="1.2" stroke-dasharray="2.2 5.8"/>
<line x1="794" y1="1133.8" x2="1989.5" y2="1133.8" stroke="#c2c2c2" stroke-width="1.2" stroke-dasharray="2.2 5.8"/>
<line x1="794" y1="1110.3" x2="1989.5" y2="1110.3" stroke="#c2c2c2" stroke-width="1.2" stroke-dasharray="2.2 5.8"/>
<line x1="794" y1="1086.9" x2="1989.5" y2="1086.9" stroke="#c2c2c2" stroke-width="1.2" stroke-dasharray="2.2 5.8"/>
<line x1="794" y1="1063.5" x2="1989.5" y2="1063.5" stroke="#c2c2c2" stroke-width="1.2" stroke-dasharray="2.2 5.8"/>
<line x1="794" y1="1040.1" x2="1989.5" y2="1040.1" stroke="#c2c2c2" stroke-width="1.2" stroke-dasharray="2.2 5.8"/>
<line x1="794" y1="1016.7" x2="1989.5" y2="1016.7" stroke="#c2c2c2" stroke-width="1.2" stroke-dasharray="2.2 5.8"/>
<line x1="794" y1="993.3" x2="1989.5" y2="993.3" stroke="#c2c2c2" stroke-width="1.2" stroke-dasharray="2.2 5.8"/>
<line x1="794" y1="969.9" x2="1989.5" y2="969.9" stroke="#c2c2c2" stroke-width="1.2" stroke-dasharray="2.2 5.8"/>
<line x1="794" y1="946.4" x2="1989.5" y2="946.4" stroke="#c2c2c2" stroke-width="1.2" stroke-dasharray="2.2 5.8"/>
<line x1="794" y1="923.0" x2="1989.5" y2="923.0" stroke="#c2c2c2" stroke-width="1.2" stroke-dasharray="2.2 5.8"/>
<line x1="794" y1="899.6" x2="1989.5" y2="899.6" stroke="#c2c2c2" stroke-width="1.2" stroke-dasharray="2.2 5.8"/>
<line x1="794" y1="876.2" x2="1989.5" y2="876.2" stroke="#c2c2c2" stroke-width="1.2" stroke-dasharray="2.2 5.8"/>
<line x1="794" y1="852.8" x2="1989.5" y2="852.8" stroke="#c2c2c2" stroke-width="1.2" stroke-dasharray="2.2 5.8"/>
<line x1="794" y1="829.4" x2="1989.5" y2="829.4" stroke="#c2c2c2" stroke-width="1.2" stroke-dasharray="2.2 5.8"/>
<line x1="794" y1="805.9" x2="1989.5" y2="805.9" stroke="#c2c2c2" stroke-width="1.2" stroke-dasharray="2.2 5.8"/>
<line x1="794" y1="782.5" x2="1989.5" y2="782.5" stroke="#c2c2c2" stroke-width="1.2" stroke-dasharray="2.2 5.8"/>
<line x1="794" y1="759.1" x2="1989.5" y2="759.1" stroke="#c2c2c2" stroke-width="1.2" stroke-dasharray="2.2 5.8"/>
<line x1="794" y1="735.7" x2="1989.5" y2="735.7" stroke="#c2c2c2" stroke-width="1.2" stroke-dasharray="2.2 5.8"/>
<line x1="794" y1="712.3" x2="1989.5" y2="712.3" stroke="#c2c2c2" stroke-width="1.2" stroke-dasharray="2.2 5.8"/>
<line x1="794" y1="688.9" x2="1989.5" y2="688.9" stroke="#c2c2c2" stroke-width="1.2" stroke-dasharray="2.2 5.8"/>
<line x1="794" y1="665.5" x2="1989.5" y2="665.5" stroke="#c2c2c2" stroke-width="1.2" stroke-dasharray="2.2 5.8"/>
<line x1="794" y1="642.0" x2="1989.5" y2="642.0" stroke="#c2c2c2" stroke-width="1.2" stroke-dasharray="2.2 5.8"/>
<line x1="794" y1="618.6" x2="1989.5" y2="618.6" stroke="#c2c2c2" stroke-width="1.2" stroke-dasharray="2.2 5.8"/>
<line x1="794" y1="595.2" x2="1989.5" y2="595.2" stroke="#c2c2c2" stroke-width="1.2" stroke-dasharray="2.2 5.8"/>
<line x1="794" y1="571.8" x2="1989.5" y2="571.8" stroke="#c2c2c2" stroke-width="1.2" stroke-dasharray="2.2 5.8"/>
<line x1="794" y1="548.4" x2="1989.5" y2="548.4" stroke="#c2c2c2" stroke-width="1.2" stroke-dasharray="2.2 5.8"/>
<line x1="794" y1="525.0" x2="1989.5" y2="525.0" stroke="#c2c2c2" stroke-width="1.2" stroke-dasharray="2.2 5.8"/>
<line x1="794" y1="501.6" x2="1989.5" y2="501.6" stroke="#c2c2c2" stroke-width="1.2" stroke-dasharray="2.2 5.8"/>
<line x1="794" y1="478.1" x2="1989.5" y2="478.1" stroke="#c2c2c2" stroke-width="1.2" stroke-dasharray="2.2 5.8"/>
<line x1="794" y1="454.7" x2="1989.5" y2="454.7" stroke="#c2c2c2" stroke-width="1.2" stroke-dasharray="2.2 5.8"/>
<line x1="794" y1="431.3" x2="1989.5" y2="431.3" stroke="#c2c2c2" stroke-width="1.2" stroke-dasharray="2.2 5.8"/>
<line x1="794" y1="407.9" x2="1989.5" y2="407.9" stroke="#c2c2c2" stroke-width="1.2" stroke-dasharray="2.2 5.8"/>
<line x1="794" y1="384.5" x2="1989.5" y2="384.5" stroke="#c2c2c2" stroke-width="1.2" stroke-dasharray="2.2 5.8"/>
<line x1="1009.4" y1="369.5" x2="1009.4" y2="1289" stroke="#c4c4c4" stroke-width="1" stroke-dasharray="3 5"/>
<line x1="1122.7" y1="369.5" x2="1122.7" y2="1289" stroke="#c4c4c4" stroke-width="1" stroke-dasharray="3 5"/>
<line x1="1236.0" y1="369.5" x2="1236.0" y2="1289" stroke="#c4c4c4" stroke-width="1" stroke-dasharray="3 5"/>
<line x1="1349.4" y1="369.5" x2="1349.4" y2="1289" stroke="#c4c4c4" stroke-width="1" stroke-dasharray="3 5"/>
<line x1="1462.8" y1="369.5" x2="1462.8" y2="1289" stroke="#c4c4c4" stroke-width="1" stroke-dasharray="3 5"/>
<line x1="1576.1" y1="369.5" x2="1576.1" y2="1289" stroke="#c4c4c4" stroke-width="1" stroke-dasharray="3 5"/>
<line x1="1689.5" y1="369.5" x2="1689.5" y2="1289" stroke="#c4c4c4" stroke-width="1" stroke-dasharray="3 5"/>
<line x1="1802.8" y1="369.5" x2="1802.8" y2="1289" stroke="#c4c4c4" stroke-width="1" stroke-dasharray="3 5"/>
<line x1="1916.2" y1="369.5" x2="1916.2" y2="1289" stroke="#c4c4c4" stroke-width="1" stroke-dasharray="3 5"/>
<line x1="1009.4" y1="363.5" x2="1009.4" y2="1289" stroke="#34404a" stroke-width="1.1"/>
<line x1="1122.7" y1="363.5" x2="1122.7" y2="1289" stroke="#34404a" stroke-width="1.1"/>
<path d="M786 363.5 H1993.5 V1289" fill="none" stroke="#505050" stroke-width="1.2"/>
<rect x="782.5" y="363.5" width="3.5" height="929.5" fill="#8c8c8c"/>
<rect x="782.5" y="1289" width="1211.0" height="3.6" fill="#9a9a9a"/>
<line x1="786" y1="1289" x2="1993.5" y2="1289" stroke="#333" stroke-width="1.2"/>
<line x1="786" y1="363.5" x2="786" y2="1289" stroke="#333" stroke-width="1.2"/>
<line x1="780" y1="1288.3" x2="786" y2="1288.3" stroke="#333" stroke-width="1"/>
<line x1="780" y1="1283.6" x2="786" y2="1283.6" stroke="#333" stroke-width="1"/>
<line x1="780" y1="1278.9" x2="786" y2="1278.9" stroke="#333" stroke-width="1"/>
<line x1="778" y1="1274.2" x2="786" y2="1274.2" stroke="#222" stroke-width="1.8"/>
<line x1="780" y1="1269.6" x2="786" y2="1269.6" stroke="#333" stroke-width="1"/>
<line x1="780" y1="1264.9" x2="786" y2="1264.9" stroke="#333" stroke-width="1"/>
<line x1="780" y1="1260.2" x2="786" y2="1260.2" stroke="#333" stroke-width="1"/>
<line x1="780" y1="1255.5" x2="786" y2="1255.5" stroke="#333" stroke-width="1"/>
<line x1="778" y1="1250.8" x2="786" y2="1250.8" stroke="#222" stroke-width="1.8"/>
<line x1="780" y1="1246.1" x2="786" y2="1246.1" stroke="#333" stroke-width="1"/>
<line x1="780" y1="1241.5" x2="786" y2="1241.5" stroke="#333" stroke-width="1"/>
<line x1="780" y1="1236.8" x2="786" y2="1236.8" stroke="#333" stroke-width="1"/>
<line x1="780" y1="1232.1" x2="786" y2="1232.1" stroke="#333" stroke-width="1"/>
<line x1="778" y1="1227.4" x2="786" y2="1227.4" stroke="#222" stroke-width="1.8"/>
<line x1="780" y1="1222.7" x2="786" y2="1222.7" stroke="#333" stroke-width="1"/>
<line x1="780" y1="1218.0" x2="786" y2="1218.0" stroke="#333" stroke-width="1"/>
<line x1="780" y1="1213.4" x2="786" y2="1213.4" stroke="#333" stroke-width="1"/>
<line x1="780" y1="1208.7" x2="786" y2="1208.7" stroke="#333" stroke-width="1"/>
<line x1="778" y1="1204.0" x2="786" y2="1204.0" stroke="#222" stroke-width="1.8"/>
<line x1="780" y1="1199.3" x2="786" y2="1199.3" stroke="#333" stroke-width="1"/>
<line x1="780" y1="1194.6" x2="786" y2="1194.6" stroke="#333" stroke-width="1"/>
<line x1="780" y1="1190.0" x2="786" y2="1190.0" stroke="#333" stroke-width="1"/>
<line x1="780" y1="1185.3" x2="786" y2="1185.3" stroke="#333" stroke-width="1"/>
<line x1="778" y1="1180.6" x2="786" y2="1180.6" stroke="#222" stroke-width="1.8"/>
<line x1="780" y1="1175.9" x2="786" y2="1175.9" stroke="#333" stroke-width="1"/>
<line x1="780" y1="1171.2" x2="786" y2="1171.2" stroke="#333" stroke-width="1"/>
<line x1="780" y1="1166.5" x2="786" y2="1166.5" stroke="#333" stroke-width="1"/>
<line x1="780" y1="1161.9" x2="786" y2="1161.9" stroke="#333" stroke-width="1"/>
<line x1="778" y1="1157.2" x2="786" y2="1157.2" stroke="#222" stroke-width="1.8"/>
<line x1="780" y1="1152.5" x2="786" y2="1152.5" stroke="#333" stroke-width="1"/>
<line x1="780" y1="1147.8" x2="786" y2="1147.8" stroke="#333" stroke-width="1"/>
<line x1="780" y1="1143.1" x2="786" y2="1143.1" stroke="#333" stroke-width="1"/>
<line x1="780" y1="1138.4" x2="786" y2="1138.4" stroke="#333" stroke-width="1"/>
<line x1="778" y1="1133.8" x2="786" y2="1133.8" stroke="#222" stroke-width="1.8"/>
<line x1="780" y1="1129.1" x2="786" y2="1129.1" stroke="#333" stroke-width="1"/>
<line x1="780" y1="1124.4" x2="786" y2="1124.4" stroke="#333" stroke-width="1"/>
<line x1="780" y1="1119.7" x2="786" y2="1119.7" stroke="#333" stroke-width="1"/>
<line x1="780" y1="1115.0" x2="786" y2="1115.0" stroke="#333" stroke-width="1"/>
<line x1="778" y1="1110.3" x2="786" y2="1110.3" stroke="#222" stroke-width="1.8"/>
<line x1="780" y1="1105.7" x2="786" y2="1105.7" stroke="#333" stroke-width="1"/>
<line x1="780" y1="1101.0" x2="786" y2="1101.0" stroke="#333" stroke-width="1"/>
<line x1="780" y1="1096.3" x2="786" y2="1096.3" stroke="#333" stroke-width="1"/>
<line x1="780" y1="1091.6" x2="786" y2="1091.6" stroke="#333" stroke-width="1"/>
<line x1="778" y1="1086.9" x2="786" y2="1086.9" stroke="#222" stroke-width="1.8"/>
<line x1="780" y1="1082.2" x2="786" y2="1082.2" stroke="#333" stroke-width="1"/>
<line x1="780" y1="1077.6" x2="786" y2="1077.6" stroke="#333" stroke-width="1"/>
<line x1="780" y1="1072.9" x2="786" y2="1072.9" stroke="#333" stroke-width="1"/>
<line x1="780" y1="1068.2" x2="786" y2="1068.2" stroke="#333" stroke-width="1"/>
<line x1="778" y1="1063.5" x2="786" y2="1063.5" stroke="#222" stroke-width="1.8"/>
<line x1="780" y1="1058.8" x2="786" y2="1058.8" stroke="#333" stroke-width="1"/>
<line x1="780" y1="1054.1" x2="786" y2="1054.1" stroke="#333" stroke-width="1"/>
<line x1="780" y1="1049.5" x2="786" y2="1049.5" stroke="#333" stroke-width="1"/>
<line x1="780" y1="1044.8" x2="786" y2="1044.8" stroke="#333" stroke-width="1"/>
<line x1="778" y1="1040.1" x2="786" y2="1040.1" stroke="#222" stroke-width="1.8"/>
<line x1="780" y1="1035.4" x2="786" y2="1035.4" stroke="#333" stroke-width="1"/>
<line x1="780" y1="1030.7" x2="786" y2="1030.7" stroke="#333" stroke-width="1"/>
<line x1="780" y1="1026.0" x2="786" y2="1026.0" stroke="#333" stroke-width="1"/>
<line x1="780" y1="1021.4" x2="786" y2="1021.4" stroke="#333" stroke-width="1"/>
<line x1="778" y1="1016.7" x2="786" y2="1016.7" stroke="#222" stroke-width="1.8"/>
<line x1="780" y1="1012.0" x2="786" y2="1012.0" stroke="#333" stroke-width="1"/>
<line x1="780" y1="1007.3" x2="786" y2="1007.3" stroke="#333" stroke-width="1"/>
<line x1="780" y1="1002.6" x2="786" y2="1002.6" stroke="#333" stroke-width="1"/>
<line x1="780" y1="997.9" x2="786" y2="997.9" stroke="#333" stroke-width="1"/>
<line x1="778" y1="993.3" x2="786" y2="993.3" stroke="#222" stroke-width="1.8"/>
<line x1="780" y1="988.6" x2="786" y2="988.6" stroke="#333" stroke-width="1"/>
<line x1="780" y1="983.9" x2="786" y2="983.9" stroke="#333" stroke-width="1"/>
<line x1="780" y1="979.2" x2="786" y2="979.2" stroke="#333" stroke-width="1"/>
<line x1="780" y1="974.5" x2="786" y2="974.5" stroke="#333" stroke-width="1"/>
<line x1="778" y1="969.9" x2="786" y2="969.9" stroke="#222" stroke-width="1.8"/>
<line x1="780" y1="965.2" x2="786" y2="965.2" stroke="#333" stroke-width="1"/>
<line x1="780" y1="960.5" x2="786" y2="960.5" stroke="#333" stroke-width="1"/>
<line x1="780" y1="955.8" x2="786" y2="955.8" stroke="#333" stroke-width="1"/>
<line x1="780" y1="951.1" x2="786" y2="951.1" stroke="#333" stroke-width="1"/>
<line x1="778" y1="946.4" x2="786" y2="946.4" stroke="#222" stroke-width="1.8"/>
<line x1="780" y1="941.8" x2="786" y2="941.8" stroke="#333" stroke-width="1"/>
<line x1="780" y1="937.1" x2="786" y2="937.1" stroke="#333" stroke-width="1"/>
<line x1="780" y1="932.4" x2="786" y2="932.4" stroke="#333" stroke-width="1"/>
<line x1="780" y1="927.7" x2="786" y2="927.7" stroke="#333" stroke-width="1"/>
<line x1="778" y1="923.0" x2="786" y2="923.0" stroke="#222" stroke-width="1.8"/>
<line x1="780" y1="918.3" x2="786" y2="918.3" stroke="#333" stroke-width="1"/>
<line x1="780" y1="913.7" x2="786" y2="913.7" stroke="#333" stroke-width="1"/>
<line x1="780" y1="909.0" x2="786" y2="909.0" stroke="#333" stroke-width="1"/>
<line x1="780" y1="904.3" x2="786" y2="904.3" stroke="#333" stroke-width="1"/>
<line x1="778" y1="899.6" x2="786" y2="899.6" stroke="#222" stroke-width="1.8"/>
<line x1="780" y1="894.9" x2="786" y2="894.9" stroke="#333" stroke-width="1"/>
<line x1="780" y1="890.2" x2="786" y2="890.2" stroke="#333" stroke-width="1"/>
<line x1="780" y1="885.6" x2="786" y2="885.6" stroke="#333" stroke-width="1"/>
<line x1="780" y1="880.9" x2="786" y2="880.9" stroke="#333" stroke-width="1"/>
<line x1="778" y1="876.2" x2="786" y2="876.2" stroke="#222" stroke-width="1.8"/>
<line x1="780" y1="871.5" x2="786" y2="871.5" stroke="#333" stroke-width="1"/>
<line x1="780" y1="866.8" x2="786" y2="866.8" stroke="#333" stroke-width="1"/>
<line x1="780" y1="862.1" x2="786" y2="862.1" stroke="#333" stroke-width="1"/>
<line x1="780" y1="857.5" x2="786" y2="857.5" stroke="#333" stroke-width="1"/>
<line x1="778" y1="852.8" x2="786" y2="852.8" stroke="#222" stroke-width="1.8"/>
<line x1="780" y1="848.1" x2="786" y2="848.1" stroke="#333" stroke-width="1"/>
<line x1="780" y1="843.4" x2="786" y2="843.4" stroke="#333" stroke-width="1"/>
<line x1="780" y1="838.7" x2="786" y2="838.7" stroke="#333" stroke-width="1"/>
<line x1="780" y1="834.0" x2="786" y2="834.0" stroke="#333" stroke-width="1"/>
<line x1="778" y1="829.4" x2="786" y2="829.4" stroke="#222" stroke-width="1.8"/>
<line x1="780" y1="824.7" x2="786" y2="824.7" stroke="#333" stroke-width="1"/>
<line x1="780" y1="820.0" x2="786" y2="820.0" stroke="#333" stroke-width="1"/>
<line x1="780" y1="815.3" x2="786" y2="815.3" stroke="#333" stroke-width="1"/>
<line x1="780" y1="810.6" x2="786" y2="810.6" stroke="#333" stroke-width="1"/>
<line x1="778" y1="805.9" x2="786" y2="805.9" stroke="#222" stroke-width="1.8"/>
<line x1="780" y1="801.3" x2="786" y2="801.3" stroke="#333" stroke-width="1"/>
<line x1="780" y1="796.6" x2="786" y2="796.6" stroke="#333" stroke-width="1"/>
<line x1="780" y1="791.9" x2="786" y2="791.9" stroke="#333" stroke-width="1"/>
<line x1="780" y1="787.2" x2="786" y2="787.2" stroke="#333" stroke-width="1"/>
<line x1="778" y1="782.5" x2="786" y2="782.5" stroke="#222" stroke-width="1.8"/>
<line x1="780" y1="777.8" x2="786" y2="777.8" stroke="#333" stroke-width="1"/>
<line x1="780" y1="773.2" x2="786" y2="773.2" stroke="#333" stroke-width="1"/>
<line x1="780" y1="768.5" x2="786" y2="768.5" stroke="#333" stroke-width="1"/>
<line x1="780" y1="763.8" x2="786" y2="763.8" stroke="#333" stroke-width="1"/>
<line x1="778" y1="759.1" x2="786" y2="759.1" stroke="#222" stroke-width="1.8"/>
<line x1="780" y1="754.4" x2="786" y2="754.4" stroke="#333" stroke-width="1"/>
<line x1="780" y1="749.7" x2="786" y2="749.7" stroke="#333" stroke-width="1"/>
<line x1="780" y1="745.1" x2="786" y2="745.1" stroke="#333" stroke-width="1"/>
<line x1="780" y1="740.4" x2="786" y2="740.4" stroke="#333" stroke-width="1"/>
<line x1="778" y1="735.7" x2="786" y2="735.7" stroke="#222" stroke-width="1.8"/>
<line x1="780" y1="731.0" x2="786" y2="731.0" stroke="#333" stroke-width="1"/>
<line x1="780" y1="726.3" x2="786" y2="726.3" stroke="#333" stroke-width="1"/>
<line x1="780" y1="721.7" x2="786" y2="721.7" stroke="#333" stroke-width="1"/>
<line x1="780" y1="717.0" x2="786" y2="717.0" stroke="#333" stroke-width="1"/>
<line x1="778" y1="712.3" x2="786" y2="712.3" stroke="#222" stroke-width="1.8"/>
<line x1="780" y1="707.6" x2="786" y2="707.6" stroke="#333" stroke-width="1"/>
<line x1="780" y1="702.9" x2="786" y2="702.9" stroke="#333" stroke-width="1"/>
<line x1="780" y1="698.2" x2="786" y2="698.2" stroke="#333" stroke-width="1"/>
<line x1="780" y1="693.6" x2="786" y2="693.6" stroke="#333" stroke-width="1"/>
<line x1="778" y1="688.9" x2="786" y2="688.9" stroke="#222" stroke-width="1.8"/>
<line x1="780" y1="684.2" x2="786" y2="684.2" stroke="#333" stroke-width="1"/>
<line x1="780" y1="679.5" x2="786" y2="679.5" stroke="#333" stroke-width="1"/>
<line x1="780" y1="674.8" x2="786" y2="674.8" stroke="#333" stroke-width="1"/>
<line x1="780" y1="670.1" x2="786" y2="670.1" stroke="#333" stroke-width="1"/>
<line x1="778" y1="665.5" x2="786" y2="665.5" stroke="#222" stroke-width="1.8"/>
<line x1="780" y1="660.8" x2="786" y2="660.8" stroke="#333" stroke-width="1"/>
<line x1="780" y1="656.1" x2="786" y2="656.1" stroke="#333" stroke-width="1"/>
<line x1="780" y1="651.4" x2="786" y2="651.4" stroke="#333" stroke-width="1"/>
<line x1="780" y1="646.7" x2="786" y2="646.7" stroke="#333" stroke-width="1"/>
<line x1="778" y1="642.0" x2="786" y2="642.0" stroke="#222" stroke-width="1.8"/>
<line x1="780" y1="637.4" x2="786" y2="637.4" stroke="#333" stroke-width="1"/>
<line x1="780" y1="632.7" x2="786" y2="632.7" stroke="#333" stroke-width="1"/>
<line x1="780" y1="628.0" x2="786" y2="628.0" stroke="#333" stroke-width="1"/>
<line x1="780" y1="623.3" x2="786" y2="623.3" stroke="#333" stroke-width="1"/>
<line x1="778" y1="618.6" x2="786" y2="618.6" stroke="#222" stroke-width="1.8"/>
<line x1="780" y1="613.9" x2="786" y2="613.9" stroke="#333" stroke-width="1"/>
<line x1="780" y1="609.3" x2="786" y2="609.3" stroke="#333" stroke-width="1"/>
<line x1="780" y1="604.6" x2="786" y2="604.6" stroke="#333" stroke-width="1"/>
<line x1="780" y1="599.9" x2="786" y2="599.9" stroke="#333" stroke-width="1"/>
<line x1="778" y1="595.2" x2="786" y2="595.2" stroke="#222" stroke-width="1.8"/>
<line x1="780" y1="590.5" x2="786" y2="590.5" stroke="#333" stroke-width="1"/>
<line x1="780" y1="585.8" x2="786" y2="585.8" stroke="#333" stroke-width="1"/>
<line x1="780" y1="581.2" x2="786" y2="581.2" stroke="#333" stroke-width="1"/>
<line x1="780" y1="576.5" x2="786" y2="576.5" stroke="#333" stroke-width="1"/>
<line x1="778" y1="571.8" x2="786" y2="571.8" stroke="#222" stroke-width="1.8"/>
<line x1="780" y1="567.1" x2="786" y2="567.1" stroke="#333" stroke-width="1"/>
<line x1="780" y1="562.4" x2="786" y2="562.4" stroke="#333" stroke-width="1"/>
<line x1="780" y1="557.7" x2="786" y2="557.7" stroke="#333" stroke-width="1"/>
<line x1="780" y1="553.1" x2="786" y2="553.1" stroke="#333" stroke-width="1"/>
<line x1="778" y1="548.4" x2="786" y2="548.4" stroke="#222" stroke-width="1.8"/>
<line x1="780" y1="543.7" x2="786" y2="543.7" stroke="#333" stroke-width="1"/>
<line x1="780" y1="539.0" x2="786" y2="539.0" stroke="#333" stroke-width="1"/>
<line x1="780" y1="534.3" x2="786" y2="534.3" stroke="#333" stroke-width="1"/>
<line x1="780" y1="529.6" x2="786" y2="529.6" stroke="#333" stroke-width="1"/>
<line x1="778" y1="525.0" x2="786" y2="525.0" stroke="#222" stroke-width="1.8"/>
<line x1="780" y1="520.3" x2="786" y2="520.3" stroke="#333" stroke-width="1"/>
<line x1="780" y1="515.6" x2="786" y2="515.6" stroke="#333" stroke-width="1"/>
<line x1="780" y1="510.9" x2="786" y2="510.9" stroke="#333" stroke-width="1"/>
<line x1="780" y1="506.2" x2="786" y2="506.2" stroke="#333" stroke-width="1"/>
<line x1="778" y1="501.6" x2="786" y2="501.6" stroke="#222" stroke-width="1.8"/>
<line x1="780" y1="496.9" x2="786" y2="496.9" stroke="#333" stroke-width="1"/>
<line x1="780" y1="492.2" x2="786" y2="492.2" stroke="#333" stroke-width="1"/>
<line x1="780" y1="487.5" x2="786" y2="487.5" stroke="#333" stroke-width="1"/>
<line x1="780" y1="482.8" x2="786" y2="482.8" stroke="#333" stroke-width="1"/>
<line x1="778" y1="478.1" x2="786" y2="478.1" stroke="#222" stroke-width="1.8"/>
<line x1="780" y1="473.5" x2="786" y2="473.5" stroke="#333" stroke-width="1"/>
<line x1="780" y1="468.8" x2="786" y2="468.8" stroke="#333" stroke-width="1"/>
<line x1="780" y1="464.1" x2="786" y2="464.1" stroke="#333" stroke-width="1"/>
<line x1="780" y1="459.4" x2="786" y2="459.4" stroke="#333" stroke-width="1"/>
<line x1="778" y1="454.7" x2="786" y2="454.7" stroke="#222" stroke-width="1.8"/>
<line x1="780" y1="450.0" x2="786" y2="450.0" stroke="#333" stroke-width="1"/>
<line x1="780" y1="445.4" x2="786" y2="445.4" stroke="#333" stroke-width="1"/>
<line x1="780" y1="440.7" x2="786" y2="440.7" stroke="#333" stroke-width="1"/>
<line x1="780" y1="436.0" x2="786" y2="436.0" stroke="#333" stroke-width="1"/>
<line x1="778" y1="431.3" x2="786" y2="431.3" stroke="#222" stroke-width="1.8"/>
<line x1="780" y1="426.6" x2="786" y2="426.6" stroke="#333" stroke-width="1"/>
<line x1="780" y1="421.9" x2="786" y2="421.9" stroke="#333" stroke-width="1"/>
<line x1="780" y1="417.3" x2="786" y2="417.3" stroke="#333" stroke-width="1"/>
<line x1="780" y1="412.6" x2="786" y2="412.6" stroke="#333" stroke-width="1"/>
<line x1="778" y1="407.9" x2="786" y2="407.9" stroke="#222" stroke-width="1.8"/>
<line x1="780" y1="403.2" x2="786" y2="403.2" stroke="#333" stroke-width="1"/>
<line x1="780" y1="398.5" x2="786" y2="398.5" stroke="#333" stroke-width="1"/>
<line x1="780" y1="393.8" x2="786" y2="393.8" stroke="#333" stroke-width="1"/>
<line x1="780" y1="389.2" x2="786" y2="389.2" stroke="#333" stroke-width="1"/>
<line x1="778" y1="384.5" x2="786" y2="384.5" stroke="#222" stroke-width="1.8"/>
<line x1="780" y1="379.8" x2="786" y2="379.8" stroke="#333" stroke-width="1"/>
<line x1="780" y1="375.1" x2="786" y2="375.1" stroke="#333" stroke-width="1"/>
<line x1="780" y1="370.4" x2="786" y2="370.4" stroke="#333" stroke-width="1"/>
<line x1="780" y1="365.7" x2="786" y2="365.7" stroke="#333" stroke-width="1"/>
<line x1="805.3" y1="1289" x2="805.3" y2="1296" stroke="#333" stroke-width="1"/>
<line x1="828.0" y1="1289" x2="828.0" y2="1296" stroke="#333" stroke-width="1"/>
<line x1="850.7" y1="1289" x2="850.7" y2="1296" stroke="#333" stroke-width="1"/>
<line x1="873.3" y1="1289" x2="873.3" y2="1296" stroke="#333" stroke-width="1"/>
<line x1="896.0" y1="1289" x2="896.0" y2="1298" stroke="#222" stroke-width="1.6"/>
<line x1="918.7" y1="1289" x2="918.7" y2="1296" stroke="#333" stroke-width="1"/>
<line x1="941.3" y1="1289" x2="941.3" y2="1296" stroke="#333" stroke-width="1"/>
<line x1="964.0" y1="1289" x2="964.0" y2="1296" stroke="#333" stroke-width="1"/>
<line x1="986.7" y1="1289" x2="986.7" y2="1296" stroke="#333" stroke-width="1"/>
<line x1="1009.4" y1="1289" x2="1009.4" y2="1298" stroke="#222" stroke-width="1.6"/>
<line x1="1032.0" y1="1289" x2="1032.0" y2="1296" stroke="#333" stroke-width="1"/>
<line x1="1054.7" y1="1289" x2="1054.7" y2="1296" stroke="#333" stroke-width="1"/>
<line x1="1077.4" y1="1289" x2="1077.4" y2="1296" stroke="#333" stroke-width="1"/>
<line x1="1100.0" y1="1289" x2="1100.0" y2="1296" stroke="#333" stroke-width="1"/>
<line x1="1122.7" y1="1289" x2="1122.7" y2="1298" stroke="#222" stroke-width="1.6"/>
<line x1="1145.4" y1="1289" x2="1145.4" y2="1296" stroke="#333" stroke-width="1"/>
<line x1="1168.0" y1="1289" x2="1168.0" y2="1296" stroke="#333" stroke-width="1"/>
<line x1="1190.7" y1="1289" x2="1190.7" y2="1296" stroke="#333" stroke-width="1"/>
<line x1="1213.4" y1="1289" x2="1213.4" y2="1296" stroke="#333" stroke-width="1"/>
<line x1="1236.0" y1="1289" x2="1236.0" y2="1298" stroke="#222" stroke-width="1.6"/>
<line x1="1258.7" y1="1289" x2="1258.7" y2="1296" stroke="#333" stroke-width="1"/>
<line x1="1281.4" y1="1289" x2="1281.4" y2="1296" stroke="#333" stroke-width="1"/>
<line x1="1304.1" y1="1289" x2="1304.1" y2="1296" stroke="#333" stroke-width="1"/>
<line x1="1326.7" y1="1289" x2="1326.7" y2="1296" stroke="#333" stroke-width="1"/>
<line x1="1349.4" y1="1289" x2="1349.4" y2="1298" stroke="#222" stroke-width="1.6"/>
<line x1="1372.1" y1="1289" x2="1372.1" y2="1296" stroke="#333" stroke-width="1"/>
<line x1="1394.7" y1="1289" x2="1394.7" y2="1296" stroke="#333" stroke-width="1"/>
<line x1="1417.4" y1="1289" x2="1417.4" y2="1296" stroke="#333" stroke-width="1"/>
<line x1="1440.1" y1="1289" x2="1440.1" y2="1296" stroke="#333" stroke-width="1"/>
<line x1="1462.8" y1="1289" x2="1462.8" y2="1298" stroke="#222" stroke-width="1.6"/>
<line x1="1485.4" y1="1289" x2="1485.4" y2="1296" stroke="#333" stroke-width="1"/>
<line x1="1508.1" y1="1289" x2="1508.1" y2="1296" stroke="#333" stroke-width="1"/>
<line x1="1530.8" y1="1289" x2="1530.8" y2="1296" stroke="#333" stroke-width="1"/>
<line x1="1553.4" y1="1289" x2="1553.4" y2="1296" stroke="#333" stroke-width="1"/>
<line x1="1576.1" y1="1289" x2="1576.1" y2="1298" stroke="#222" stroke-width="1.6"/>
<line x1="1598.8" y1="1289" x2="1598.8" y2="1296" stroke="#333" stroke-width="1"/>
<line x1="1621.4" y1="1289" x2="1621.4" y2="1296" stroke="#333" stroke-width="1"/>
<line x1="1644.1" y1="1289" x2="1644.1" y2="1296" stroke="#333" stroke-width="1"/>
<line x1="1666.8" y1="1289" x2="1666.8" y2="1296" stroke="#333" stroke-width="1"/>
<line x1="1689.5" y1="1289" x2="1689.5" y2="1298" stroke="#222" stroke-width="1.6"/>
<line x1="1712.1" y1="1289" x2="1712.1" y2="1296" stroke="#333" stroke-width="1"/>
<line x1="1734.8" y1="1289" x2="1734.8" y2="1296" stroke="#333" stroke-width="1"/>
<line x1="1757.5" y1="1289" x2="1757.5" y2="1296" stroke="#333" stroke-width="1"/>
<line x1="1780.1" y1="1289" x2="1780.1" y2="1296" stroke="#333" stroke-width="1"/>
<line x1="1802.8" y1="1289" x2="1802.8" y2="1298" stroke="#222" stroke-width="1.6"/>
<line x1="1825.5" y1="1289" x2="1825.5" y2="1296" stroke="#333" stroke-width="1"/>
<line x1="1848.1" y1="1289" x2="1848.1" y2="1296" stroke="#333" stroke-width="1"/>
<line x1="1870.8" y1="1289" x2="1870.8" y2="1296" stroke="#333" stroke-width="1"/>
<line x1="1893.5" y1="1289" x2="1893.5" y2="1296" stroke="#333" stroke-width="1"/>
<line x1="1916.2" y1="1289" x2="1916.2" y2="1298" stroke="#222" stroke-width="1.6"/>
<line x1="1938.8" y1="1289" x2="1938.8" y2="1296" stroke="#333" stroke-width="1"/>
<line x1="1961.5" y1="1289" x2="1961.5" y2="1296" stroke="#333" stroke-width="1"/>
<line x1="1984.2" y1="1289" x2="1984.2" y2="1296" stroke="#333" stroke-width="1"/>
<line x1="786" y1="735.7" x2="1993.5" y2="735.7" stroke="#f2cf6a" stroke-width="2.4"/>
<line x1="786" y1="1204.0" x2="1993.5" y2="1204.0" stroke="#262626" stroke-width="1.7"/>
<line x1="896.0" y1="363.5" x2="896.0" y2="1298" stroke="#262626" stroke-width="1.7"/>
<polyline points="896.0,1204.0 908.0,950.0 915.0,770.0 922.5,627.5 925.0,692.5 928.8,678.8 930.6,688.1 935.0,688.1 936.0,688.1 936.0,692.9 938.1,692.9 938.1,697.7 940.2,697.7 940.2,702.5 941.2,702.5 948.8,702.5 951.2,711.9 952.5,711.9 952.5,716.0 955.0,716.0 955.0,720.0 956.2,720.0 965.0,780.0 966.2,780.0 966.2,774.6 968.8,774.6 968.8,769.2 971.2,769.2 971.2,763.8 972.5,763.8 974.1,763.8 974.1,758.8 977.2,758.8 977.2,753.8 978.8,753.8 980.0,753.8 980.0,749.4 982.5,749.4 982.5,745.0 983.8,745.0 988.1,745.0 990.0,772.5 992.5,768.0 996.2,768.0 998.8,791.9 1005.0,791.9 1011.2,770.0 1016.2,745.0 1018.4,745.0 1018.4,748.8 1020.6,748.8 1021.3,748.8 1021.3,744.2 1022.7,744.2 1022.7,739.8 1024.0,739.8 1024.0,735.2 1025.4,735.2 1025.4,730.8 1026.8,730.8 1026.8,726.2 1027.5,726.2 1030.0,758.8 1034.4,758.8 1035.6,749.4 1038.1,772.5 1038.9,772.5 1038.9,768.0 1040.5,768.0 1040.5,763.5 1042.2,763.5 1042.2,759.0 1043.8,759.0 1043.8,754.5 1045.4,754.5 1045.4,750.0 1046.2,750.0 1052.5,750.0 1057.5,780.0 1060.0,852.5 1071.2,805.0 1072.4,805.0 1072.4,800.4 1074.6,800.4 1074.6,795.8 1076.9,795.8 1076.9,791.1 1079.1,791.1 1079.1,786.5 1081.4,786.5 1081.4,781.9 1082.5,781.9 1083.3,781.9 1083.3,786.6 1084.8,786.6 1084.8,791.2 1085.6,791.2 1087.0,791.2 1087.0,787.5 1089.8,787.5 1089.8,783.8 1091.2,783.8 1094.1,783.8 1094.1,786.9 1096.9,786.9 1100.0,805.0 1101.9,861.2 1105.3,861.2 1105.3,855.0 1108.8,855.0 1110.3,855.0 1110.3,852.5 1111.9,852.5 1115.0,870.0 1116.2,870.0 1116.2,875.0 1118.8,875.0 1118.8,880.0 1121.2,880.0 1121.2,885.0 1122.5,885.0 1123.8,885.0 1123.8,880.2 1126.2,880.2 1126.2,875.5 1128.8,875.5 1128.8,870.8 1131.2,870.8 1131.2,866.0 1133.8,866.0 1133.8,861.2 1135.0,861.2 1136.9,861.2 1136.9,856.9 1138.8,856.9 1145.6,856.9 1146.3,856.9 1146.3,862.1 1147.8,862.1 1147.8,867.3 1149.3,867.3 1149.3,872.5 1150.0,872.5 1151.0,872.5 1151.0,876.7 1153.1,876.7 1153.1,880.8 1155.2,880.8 1155.2,885.0 1156.2,885.0 1156.9,908.8 1167.5,908.8 1169.6,908.8 1169.6,913.8 1173.8,913.8 1173.8,918.8 1177.9,918.8 1177.9,923.8 1180.0,923.8 1181.9,923.8 1181.9,928.3 1185.7,928.3 1185.7,932.8 1189.5,932.8 1189.5,937.4 1193.3,937.4 1193.3,941.9 1197.1,941.9 1197.1,946.4 1200.8,946.4 1200.8,951.0 1204.6,951.0 1204.6,955.5 1208.4,955.5 1208.4,960.0 1212.2,960.0 1212.2,964.6 1216.0,964.6 1216.0,969.1 1217.9,969.1 1220.3,969.1 1220.3,973.5 1225.2,973.5 1225.2,977.9 1230.0,977.9 1230.0,982.2 1234.9,982.2 1234.9,986.6 1239.7,986.6 1239.7,991.0 1244.6,991.0 1244.6,995.4 1247.0,995.4 1251.8,995.4 1251.8,1000.5 1261.2,1000.5 1261.2,1005.6 1270.8,1005.6 1270.8,1010.7 1280.2,1010.7 1280.2,1015.8 1285.0,1015.8 1317.0,1015.8 1320.0,1011.4 1334.5,1011.4 1334.5,1007.0 1349.1,1007.0 1378.3,1007.0 1381.2,1007.0 1381.2,1011.4 1384.1,1011.4 1403.0,1011.4 1403.0,1017.2 1422.0,1017.2 1429.3,1017.2 1429.3,1021.6 1443.9,1021.6 1443.9,1026.0 1451.2,1026.0 1462.1,1026.0 1462.1,1030.0 1472.9,1030.0 1498.9,1030.0 1500.3,1034.9 1520.8,1034.9 1522.2,1039.6 1541.3,1039.6 1542.7,1044.5 1563.2,1044.5 1564.5,1049.1 1583.7,1049.1 1585.0,1053.8 1617.9,1053.8 1619.2,1058.2 1652.0,1058.2 1653.4,1063.1 1704.0,1063.1 1705.4,1058.2 1751.9,1058.2 1753.2,1053.8 1813.4,1053.8 1814.8,1058.2 1851.7,1058.2 1853.0,1053.8 1887.2,1053.8 1888.6,1049.1 1892.7,1049.1" fill="none" stroke="#ed7d31" stroke-width="2.2" stroke-linejoin="miter" stroke-miterlimit="3"/>
<polyline points="896.0,1200.0 927.3,1040.8 938.4,994.5 939.2,994.5 939.2,989.5 940.9,989.5 940.9,984.4 942.6,984.4 942.6,979.4 944.3,979.4 944.3,974.4 946.0,974.4 946.0,969.3 947.7,969.3 947.7,964.3 948.5,964.3 949.3,964.3 949.3,959.7 950.9,959.7 950.9,955.1 952.4,955.1 952.4,950.5 954.0,950.5 954.0,945.9 955.6,945.9 955.6,941.3 957.1,941.3 957.1,936.7 958.7,936.7 958.7,932.1 959.5,932.1 961.9,964.3 966.6,947.2 968.6,955.2 978.6,955.2 980.0,974.4 990.7,974.4 991.7,969.3 994.4,978.4 995.6,978.4 995.6,974.0 998.0,974.0 998.0,969.7 1000.4,969.7 1000.4,965.3 1002.8,965.3 1002.8,960.9 1005.2,960.9 1005.2,956.6 1007.6,956.6 1007.6,952.2 1008.8,952.2 1010.8,952.2 1010.8,947.2 1014.8,947.2 1014.8,942.1 1018.9,942.1 1018.9,937.1 1020.9,937.1 1025.0,937.1 1025.0,932.1 1029.0,932.1 1030.2,932.1 1030.2,936.6 1032.8,936.6 1032.8,941.1 1034.0,941.1 1044.0,941.1 1045.8,941.1 1045.8,945.7 1049.3,945.7 1049.3,950.2 1051.1,950.2 1057.2,950.2 1057.2,956.2 1063.2,956.2 1065.5,956.2 1065.5,960.8 1070.0,960.8 1070.0,965.3 1074.5,965.3 1074.5,969.9 1079.0,969.9 1079.0,974.4 1081.3,974.4 1082.0,974.4 1082.0,979.1 1083.3,979.1 1083.3,983.8 1084.7,983.8 1084.7,988.5 1085.4,988.5 1091.4,988.5 1093.4,1020.7 1096.4,1024.7 1102.0,1024.7 1102.0,1020.7 1107.5,1020.7 1110.5,1034.8 1117.6,1034.8 1119.6,1029.7 1125.6,1029.7 1127.4,1029.7 1127.4,1034.7 1131.2,1034.7 1131.2,1039.8 1134.8,1039.8 1134.8,1044.8 1136.7,1044.8 1151.8,1044.8 1153.8,1048.8 1155.8,1044.8 1178.0,1044.8 1179.0,1039.8 1206.2,1039.8 1210.2,1039.8 1210.2,1044.8 1214.2,1044.8 1217.2,1057.9 1221.8,1057.9 1221.8,1053.9 1226.3,1053.9 1247.3,1054.6 1249.0,1054.6 1249.0,1058.7 1252.5,1058.7 1252.5,1062.8 1254.2,1062.8 1257.6,1062.8 1257.6,1068.3 1261.0,1068.3 1262.7,1068.3 1262.7,1073.8 1266.2,1073.8 1266.2,1079.2 1267.9,1079.2 1272.0,1095.6 1274.7,1110.7 1292.5,1110.7 1293.8,1105.2 1315.7,1105.2 1317.0,1110.1 1330.7,1110.1 1332.1,1114.8 1347.2,1114.8 1348.5,1119.7 1359.5,1119.7 1362.2,1138.0 1364.9,1142.7 1378.6,1142.7 1380.0,1138.0 1404.6,1138.0 1405.9,1133.4 1431.9,1133.4 1434.0,1133.4 1434.0,1129.0 1436.0,1129.0 1478.4,1129.0 1479.8,1133.4 1493.5,1133.4 1494.8,1138.0 1537.2,1138.0 1538.6,1142.7 1613.8,1142.7 1615.1,1147.6 1775.1,1147.6 1776.5,1152.5 1883.1,1152.5 1884.5,1147.6 1887.2,1152.5 1892.7,1152.5" fill="none" stroke="#f01010" stroke-width="2.2" stroke-linejoin="miter" stroke-miterlimit="3"/>
<polyline points="896.0,1204.0 904.4,780.0 908.0,600.0 911.2,439.5 912.6,447.0 914.2,463.0 915.3,490.0 916.0,520.0 917.0,545.0 918.6,561.0 921.0,571.0 923.0,575.6 926.5,575.6 928.0,571.9 930.0,571.9 930.7,571.9 930.7,567.1 932.2,567.1 932.2,562.3 933.6,562.3 933.6,557.5 935.1,557.5 935.1,552.7 936.5,552.7 936.5,547.9 938.0,547.9 938.0,543.1 939.5,543.1 939.5,538.3 940.9,538.3 940.9,533.5 942.4,533.5 942.4,528.8 943.1,528.8 944.4,540.0 944.4,698.0 951.9,665.0 952.7,665.0 952.7,660.2 954.3,660.2 954.3,655.4 956.0,655.4 956.0,650.6 957.6,650.6 957.6,645.8 959.2,645.8 959.2,641.0 960.0,641.0 961.0,641.0 961.0,636.5 963.0,636.5 963.0,632.0 965.1,632.0 965.1,627.6 967.1,627.6 967.1,623.1 968.1,623.1 968.9,623.1 968.9,627.4 970.6,627.4 970.6,631.7 972.3,631.7 972.3,636.0 973.1,636.0 974.7,636.0 974.7,633.0 976.2,633.0 977.5,636.5 985.0,636.5 986.9,632.5 1008.8,632.5 1009.4,627.5 1018.1,627.5 1019.4,787.0 1030.0,723.0 1031.6,723.0 1031.6,718.0 1034.7,718.0 1034.7,713.0 1036.2,713.0 1038.1,713.0 1038.1,707.5 1040.0,707.5 1042.5,712.5 1047.5,730.0 1051.2,730.0 1051.2,735.0 1055.0,735.0 1058.3,735.0 1058.3,740.0 1065.0,740.0 1065.0,745.0 1071.7,745.0 1071.7,750.0 1075.0,750.0 1077.9,750.0 1077.9,755.0 1083.8,755.0 1083.8,760.0 1089.6,760.0 1089.6,765.0 1092.5,765.0 1098.1,765.0 1098.1,770.0 1103.8,770.0 1107.2,770.0 1107.2,773.8 1114.1,773.8 1114.1,777.5 1117.5,777.5 1120.6,777.5 1120.6,782.5 1123.8,782.5 1126.6,782.5 1126.6,787.5 1132.2,787.5 1132.2,792.5 1135.0,792.5 1140.6,792.5 1140.6,796.9 1151.9,796.9 1151.9,801.2 1157.5,801.2 1170.0,801.2 1170.0,806.2 1182.5,806.2 1187.0,806.2 1187.0,810.5 1195.8,810.5 1195.8,814.8 1204.8,814.8 1204.8,819.0 1209.2,819.0 1218.0,819.0 1218.0,823.8 1235.5,823.8 1235.5,828.7 1253.0,828.7 1253.0,833.5 1261.7,833.5 1271.5,833.5 1271.5,837.9 1291.2,837.9 1291.2,842.3 1301.0,842.3 1310.1,842.3 1310.1,846.0 1328.4,846.0 1328.4,849.6 1337.5,849.6 1349.2,849.6 1349.2,855.4 1372.4,855.4 1372.4,861.2 1384.1,861.2 1393.6,861.2 1393.6,865.6 1412.5,865.6 1412.5,870.0 1422.0,870.0 1430.3,870.0 1430.3,874.9 1446.8,874.9 1446.8,879.7 1463.3,879.7 1463.3,884.6 1471.6,884.6 1478.9,884.6 1478.9,889.4 1493.5,889.4 1493.5,894.3 1508.1,894.3 1508.1,899.1 1515.4,899.1 1527.7,899.1 1527.7,905.0 1540.0,905.0 1545.0,905.0 1545.0,909.2 1555.0,909.2 1555.0,913.3 1565.0,913.3 1565.0,917.5 1570.0,917.5 1575.8,917.5 1575.8,922.5 1587.5,922.5 1587.5,927.5 1599.2,927.5 1599.2,932.5 1605.0,932.5 1611.7,932.5 1611.7,936.7 1625.0,936.7 1625.0,940.8 1638.3,940.8 1638.3,945.0 1645.0,945.0 1651.7,945.0 1651.7,950.0 1665.0,950.0 1665.0,955.0 1678.3,955.0 1678.3,960.0 1685.0,960.0 1692.5,960.0 1692.5,965.0 1707.5,965.0 1707.5,970.0 1722.5,970.0 1722.5,975.0 1730.0,975.0 1736.9,975.0 1736.9,979.4 1750.6,979.4 1750.6,983.8 1757.5,983.8 1771.2,983.8 1771.2,988.1 1798.8,988.1 1798.8,992.5 1812.5,992.5 1820.8,992.5 1820.8,997.1 1837.5,997.1 1837.5,1001.7 1854.2,1001.7 1854.2,1006.2 1862.5,1006.2 1870.0,1006.2 1870.0,1011.2 1885.0,1011.2 1885.0,1016.2 1892.5,1016.2" fill="none" stroke="#0a820a" stroke-width="2.2" stroke-linejoin="miter" stroke-miterlimit="3"/>
<polyline points="896.0,1204.0 912.0,920.0 923.0,770.0 941.9,600.0 952.2,482.5 953.5,720.0 961.2,600.0 965.0,560.0 966.2,556.9 970.6,556.9 971.3,556.9 971.3,561.9 972.8,561.9 972.8,566.9 974.3,566.9 974.3,571.9 975.0,571.9 985.0,620.0 993.8,653.8 994.9,653.8 994.9,658.9 997.3,658.9 997.3,664.1 999.6,664.1 999.6,669.2 1001.9,669.2 1001.9,674.4 1003.1,674.4 1014.4,674.4 1015.1,674.4 1015.1,670.0 1016.6,670.0 1016.6,665.6 1018.0,665.6 1018.0,661.2 1018.8,661.2 1020.2,661.2 1020.2,656.5 1023.1,656.5 1023.1,651.7 1026.0,651.7 1026.0,646.9 1027.5,646.9 1031.0,646.9 1031.0,642.5 1034.4,642.5 1035.5,642.5 1035.5,637.6 1037.6,637.6 1037.6,632.7 1039.7,632.7 1039.7,627.8 1041.8,627.8 1041.8,622.9 1043.9,622.9 1043.9,618.0 1045.0,618.0 1047.5,618.0 1047.5,613.8 1050.0,613.8 1055.0,613.8 1055.6,618.0 1066.9,618.0 1068.8,631.9 1077.5,631.9 1078.4,631.9 1078.4,636.6 1080.3,636.6 1080.3,641.2 1081.2,641.2 1085.6,641.2 1098.5,510.0 1100.0,583.8 1101.2,617.5 1106.2,594.4 1107.5,612.5 1111.2,720.0 1113.8,725.0 1117.5,766.0 1120.0,785.0 1125.6,749.4 1128.8,780.0 1131.2,763.8 1133.0,780.0 1141.2,725.0 1142.1,725.0 1142.1,720.4 1143.8,720.4 1143.8,715.8 1145.4,715.8 1145.4,711.2 1146.2,711.2 1151.2,688.1 1154.4,688.1 1159.0,740.0 1162.0,775.0 1166.2,795.0 1167.5,832.5 1180.0,920.0 1182.0,922.5 1207.7,922.5 1212.8,922.5 1212.8,916.6 1217.9,916.6 1220.5,916.6 1220.5,912.2 1225.5,912.2 1225.5,907.9 1228.1,907.9 1233.2,907.9 1233.2,903.5 1238.3,903.5 1270.4,903.5 1272.6,903.5 1272.6,907.9 1274.8,907.9 1299.6,907.9 1301.8,907.9 1301.8,902.8 1306.1,902.8 1306.1,897.7 1308.3,897.7 1309.8,897.7 1309.8,893.3 1312.7,893.3 1312.7,888.9 1315.6,888.9 1315.6,884.6 1318.5,884.6 1318.5,880.2 1321.4,880.2 1321.4,875.8 1322.9,875.8 1323.9,875.8 1323.9,870.8 1326.0,870.8 1326.0,865.8 1328.1,865.8 1328.1,860.8 1330.2,860.8 1330.2,855.8 1332.3,855.8 1332.3,850.8 1334.4,850.8 1334.4,845.8 1336.5,845.8 1336.5,840.8 1337.5,840.8 1338.5,840.8 1338.5,836.3 1340.4,836.3 1340.4,831.7 1342.4,831.7 1342.4,827.2 1344.3,827.2 1344.3,822.7 1346.2,822.7 1346.2,818.1 1348.2,818.1 1348.2,813.6 1350.1,813.6 1350.1,809.1 1352.1,809.1 1352.1,804.5 1354.0,804.5 1354.0,800.0 1355.0,800.0 1355.8,800.0 1355.8,795.5 1357.4,795.5 1357.4,790.9 1359.1,790.9 1359.1,786.4 1360.7,786.4 1360.7,781.9 1362.3,781.9 1362.3,777.3 1363.9,777.3 1363.9,772.8 1365.5,772.8 1365.5,768.3 1367.2,768.3 1367.2,763.7 1368.8,763.7 1368.8,759.2 1369.6,759.2 1370.5,759.2 1370.5,754.5 1372.3,754.5 1372.3,749.7 1374.1,749.7 1374.1,745.0 1375.9,745.0 1375.9,740.2 1377.8,740.2 1377.8,735.5 1379.6,735.5 1379.6,730.7 1381.4,730.7 1381.4,726.0 1383.2,726.0 1383.2,721.2 1384.1,721.2 1385.6,721.2 1385.6,716.5 1388.5,716.5 1388.5,711.9 1390.0,711.9 1397.3,711.9 1399.5,711.9 1399.5,706.8 1403.8,706.8 1403.8,701.6 1408.2,701.6 1408.2,696.5 1410.4,696.5 1411.9,696.5 1411.9,692.1 1414.8,692.1 1414.8,687.7 1417.6,687.7 1417.6,683.3 1419.1,683.3 1427.2,683.3 1427.2,679.0 1435.2,679.0 1468.7,679.0 1469.7,679.0 1469.7,684.3 1471.6,684.3 1471.6,689.7 1473.5,689.7 1473.5,695.0 1474.5,695.0 1484.8,747.5 1486.2,747.5 1486.2,752.4 1489.2,752.4 1489.2,757.2 1492.0,757.2 1492.0,762.1 1493.5,762.1 1503.7,800.0 1521.2,800.0 1522.7,800.0 1522.7,796.4 1525.5,796.4 1525.5,792.7 1527.0,792.7 1534.3,792.7 1534.3,795.6 1541.6,795.6 1545.0,810.0 1547.5,870.0 1550.0,978.8 1565.0,907.5 1565.7,907.5 1565.7,903.1 1567.1,903.1 1567.1,898.6 1568.5,898.6 1568.5,894.2 1569.9,894.2 1569.9,889.7 1571.2,889.7 1571.2,885.3 1572.6,885.3 1572.6,880.8 1574.0,880.8 1574.0,876.4 1575.4,876.4 1575.4,871.9 1576.8,871.9 1576.8,867.5 1577.5,867.5 1579.1,867.5 1579.1,862.8 1582.2,862.8 1582.2,858.1 1585.3,858.1 1585.3,853.4 1588.4,853.4 1588.4,848.8 1590.0,848.8 1592.1,848.8 1592.1,844.4 1596.2,844.4 1596.2,840.0 1600.4,840.0 1600.4,835.6 1604.6,835.6 1604.6,831.2 1608.8,831.2 1608.8,826.9 1612.9,826.9 1612.9,822.5 1615.0,822.5 1617.1,822.5 1617.1,817.9 1621.2,817.9 1621.2,813.3 1625.4,813.3 1625.4,808.8 1629.6,808.8 1629.6,804.2 1633.8,804.2 1633.8,799.6 1637.9,799.6 1637.9,795.0 1640.0,795.0 1641.7,795.0 1641.7,790.8 1645.0,790.8 1645.0,786.7 1648.3,786.7 1648.3,782.5 1650.0,782.5 1653.1,782.5 1653.1,786.2 1656.2,786.2 1659.4,786.2 1659.4,782.5 1662.5,782.5 1686.2,782.5 1688.5,782.5 1688.5,786.7 1693.1,786.7 1693.1,790.8 1697.7,790.8 1697.7,795.0 1700.0,795.0 1700.8,795.0 1700.8,800.0 1702.5,800.0 1702.5,805.0 1704.2,805.0 1704.2,810.0 1705.0,810.0 1712.5,852.5 1715.0,852.5 1715.0,856.2 1717.5,856.2 1726.2,856.2 1733.1,856.2 1733.1,852.5 1740.0,852.5 1742.1,852.5 1742.1,847.5 1746.2,847.5 1746.2,842.5 1750.4,842.5 1750.4,837.5 1752.5,837.5 1758.8,837.5 1758.8,833.8 1765.0,833.8 1777.5,833.8 1777.5,828.8 1790.0,828.8 1792.5,828.8 1792.5,824.2 1797.5,824.2 1797.5,819.6 1802.5,819.6 1802.5,815.0 1805.0,815.0 1810.0,815.0 1810.0,812.5 1815.0,812.5 1817.5,812.5 1817.5,808.2 1822.5,808.2 1822.5,804.0 1827.5,804.0 1827.5,799.8 1832.5,799.8 1832.5,795.5 1837.5,795.5 1837.5,791.2 1840.0,791.2 1842.1,791.2 1842.1,786.7 1846.2,786.7 1846.2,782.1 1850.4,782.1 1850.4,777.5 1854.6,777.5 1854.6,772.9 1858.8,772.9 1858.8,768.3 1862.9,768.3 1862.9,763.8 1865.0,763.8 1867.8,763.8 1867.8,759.0 1873.2,759.0 1873.2,754.2 1878.8,754.2 1878.8,749.5 1884.2,749.5 1884.2,744.8 1889.8,744.8 1889.8,740.0 1892.5,740.0" fill="none" stroke="#0a0ae8" stroke-width="2.2" stroke-linejoin="miter" stroke-miterlimit="3"/>
<line x1="1273" y1="439.2" x2="917" y2="440.5" stroke="#78b078" stroke-width="2.4"/>
<path d="M912.5 440.5 L919.2 435.8 L919.2 445.2 Z" fill="#6a9e6a"/>
</svg>
<div class="t" style="left:753.33px;top:1268.86px;font-size:12.5px;line-height:12.5px;color:#222;transform:scaleX(0.9700);transform-origin:right;">-15</div>
<div class="t" style="left:753.33px;top:1245.45px;font-size:12.5px;line-height:12.5px;color:#222;transform:scaleX(0.9700);transform-origin:right;">-10</div>
<div class="t" style="left:760.29px;top:1222.03px;font-size:12.5px;line-height:12.5px;color:#222;transform:scaleX(0.9700);transform-origin:right;">-5</div>
<div class="t" style="left:764.45px;top:1198.62px;font-size:12.5px;line-height:12.5px;color:#222;transform:scaleX(0.9700);transform-origin:right;">0</div>
<div class="t" style="left:764.45px;top:1175.20px;font-size:12.5px;line-height:12.5px;color:#222;transform:scaleX(0.9700);transform-origin:right;">5</div>
<div class="t" style="left:757.50px;top:1151.79px;font-size:12.5px;line-height:12.5px;color:#222;transform:scaleX(0.9700);transform-origin:right;">10</div>
<div class="t" style="left:757.50px;top:1128.37px;font-size:12.5px;line-height:12.5px;color:#222;transform:scaleX(0.9700);transform-origin:right;">15</div>
<div class="t" style="left:757.50px;top:1104.96px;font-size:12.5px;line-height:12.5px;color:#222;transform:scaleX(0.9700);transform-origin:right;">20</div>
<div class="t" style="left:757.50px;top:1081.54px;font-size:12.5px;line-height:12.5px;color:#222;transform:scaleX(0.9700);transform-origin:right;">25</div>
<div class="t" style="left:757.50px;top:1058.13px;font-size:12.5px;line-height:12.5px;color:#222;transform:scaleX(0.9700);transform-origin:right;">30</div>
<div class="t" style="left:757.50px;top:1034.71px;font-size:12.5px;line-height:12.5px;color:#222;transform:scaleX(0.9700);transform-origin:right;">35</div>
<div class="t" style="left:757.50px;top:1011.30px;font-size:12.5px;line-height:12.5px;color:#222;transform:scaleX(0.9700);transform-origin:right;">40</div>
<div class="t" style="left:757.50px;top:987.88px;font-size:12.5px;line-height:12.5px;color:#222;transform:scaleX(0.9700);transform-origin:right;">45</div>
<div class="t" style="left:757.50px;top:964.47px;font-size:12.5px;line-height:12.5px;color:#222;transform:scaleX(0.9700);transform-origin:right;">50</div>
<div class="t" style="left:757.50px;top:941.05px;font-size:12.5px;line-height:12.5px;color:#222;transform:scaleX(0.9700);transform-origin:right;">55</div>
<div class="t" style="left:757.50px;top:917.64px;font-size:12.5px;line-height:12.5px;color:#222;transform:scaleX(0.9700);transform-origin:right;">60</div>
<div class="t" style="left:757.50px;top:894.22px;font-size:12.5px;line-height:12.5px;color:#222;transform:scaleX(0.9700);transform-origin:right;">65</div>
<div class="t" style="left:757.50px;top:870.81px;font-size:12.5px;line-height:12.5px;color:#222;transform:scaleX(0.9700);transform-origin:right;">70</div>
<div class="t" style="left:757.50px;top:847.39px;font-size:12.5px;line-height:12.5px;color:#222;transform:scaleX(0.9700);transform-origin:right;">75</div>
<div class="t" style="left:757.50px;top:823.98px;font-size:12.5px;line-height:12.5px;color:#222;transform:scaleX(0.9700);transform-origin:right;">80</div>
<div class="t" style="left:757.50px;top:800.56px;font-size:12.5px;line-height:12.5px;color:#222;transform:scaleX(0.9700);transform-origin:right;">85</div>
<div class="t" style="left:757.50px;top:777.15px;font-size:12.5px;line-height:12.5px;color:#222;transform:scaleX(0.9700);transform-origin:right;">90</div>
<div class="t" style="left:757.50px;top:753.73px;font-size:12.5px;line-height:12.5px;color:#222;transform:scaleX(0.9700);transform-origin:right;">95</div>
<div class="t" style="left:750.54px;top:730.32px;font-size:12.5px;line-height:12.5px;color:#222;transform:scaleX(0.9700);transform-origin:right;">100</div>
<div class="t" style="left:750.54px;top:706.90px;font-size:12.5px;line-height:12.5px;color:#222;transform:scaleX(0.9700);transform-origin:right;">105</div>
<div class="t" style="left:751.47px;top:683.49px;font-size:12.5px;line-height:12.5px;color:#222;transform:scaleX(0.9700);transform-origin:right;">110</div>
<div class="t" style="left:751.47px;top:660.07px;font-size:12.5px;line-height:12.5px;color:#222;transform:scaleX(0.9700);transform-origin:right;">115</div>
<div class="t" style="left:750.54px;top:636.66px;font-size:12.5px;line-height:12.5px;color:#222;transform:scaleX(0.9700);transform-origin:right;">120</div>
<div class="t" style="left:750.54px;top:613.24px;font-size:12.5px;line-height:12.5px;color:#222;transform:scaleX(0.9700);transform-origin:right;">125</div>
<div class="t" style="left:750.54px;top:589.83px;font-size:12.5px;line-height:12.5px;color:#222;transform:scaleX(0.9700);transform-origin:right;">130</div>
<div class="t" style="left:750.54px;top:566.41px;font-size:12.5px;line-height:12.5px;color:#222;transform:scaleX(0.9700);transform-origin:right;">135</div>
<div class="t" style="left:750.54px;top:543.00px;font-size:12.5px;line-height:12.5px;color:#222;transform:scaleX(0.9700);transform-origin:right;">140</div>
<div class="t" style="left:750.54px;top:519.58px;font-size:12.5px;line-height:12.5px;color:#222;transform:scaleX(0.9700);transform-origin:right;">145</div>
<div class="t" style="left:750.54px;top:496.17px;font-size:12.5px;line-height:12.5px;color:#222;transform:scaleX(0.9700);transform-origin:right;">150</div>
<div class="t" style="left:750.54px;top:472.75px;font-size:12.5px;line-height:12.5px;color:#222;transform:scaleX(0.9700);transform-origin:right;">155</div>
<div class="t" style="left:750.54px;top:449.34px;font-size:12.5px;line-height:12.5px;color:#222;transform:scaleX(0.9700);transform-origin:right;">160</div>
<div class="t" style="left:750.54px;top:425.92px;font-size:12.5px;line-height:12.5px;color:#222;transform:scaleX(0.9700);transform-origin:right;">165</div>
<div class="t" style="left:750.54px;top:402.51px;font-size:12.5px;line-height:12.5px;color:#222;transform:scaleX(0.9700);transform-origin:right;">170</div>
<div class="t" style="left:750.54px;top:379.09px;font-size:12.5px;line-height:12.5px;color:#222;transform:scaleX(0.9700);transform-origin:right;">175</div>
<div class="t" style="left:892.82px;top:1304.02px;font-size:12.5px;line-height:12.5px;color:#222;transform:scaleX(0.9700);transform-origin:center;">0</div>
<div class="t" style="left:1006.17px;top:1304.02px;font-size:12.5px;line-height:12.5px;color:#222;transform:scaleX(0.9700);transform-origin:center;">5</div>
<div class="t" style="left:1116.05px;top:1304.02px;font-size:12.5px;line-height:12.5px;color:#222;transform:scaleX(0.9700);transform-origin:center;">10</div>
<div class="t" style="left:1229.40px;top:1304.02px;font-size:12.5px;line-height:12.5px;color:#222;transform:scaleX(0.9700);transform-origin:center;">15</div>
<div class="t" style="left:1342.75px;top:1304.02px;font-size:12.5px;line-height:12.5px;color:#222;transform:scaleX(0.9700);transform-origin:center;">20</div>
<div class="t" style="left:1456.10px;top:1304.02px;font-size:12.5px;line-height:12.5px;color:#222;transform:scaleX(0.9700);transform-origin:center;">25</div>
<div class="t" style="left:1569.45px;top:1304.02px;font-size:12.5px;line-height:12.5px;color:#222;transform:scaleX(0.9700);transform-origin:center;">30</div>
<div class="t" style="left:1682.80px;top:1304.02px;font-size:12.5px;line-height:12.5px;color:#222;transform:scaleX(0.9700);transform-origin:center;">35</div>
<div class="t" style="left:1796.15px;top:1304.02px;font-size:12.5px;line-height:12.5px;color:#222;transform:scaleX(0.9700);transform-origin:center;">40</div>
<div class="t" style="left:1909.50px;top:1304.02px;font-size:12.5px;line-height:12.5px;color:#222;transform:scaleX(0.9700);transform-origin:center;">45</div>
<div class="t" style="left:711.5px;top:826px;font-size:21px;line-height:21px;font-weight:700;color:#0000e6;transform:translate(-50%,-50%) rotate(-90deg) scaleX(0.974);">Force (N)</div>
<div class="t" style="left:1292.90px;top:1335.42px;font-size:21px;line-height:21px;font-weight:700;color:#e60000;">Displacement (mm)</div>
<div class="a" style="left:1273px;top:390px;width:229px;height:97.5px;background:#008000;"></div>
<div class="t" style="left:1285.00px;top:407.79px;font-size:17.5px;line-height:17.5px;color:#fff;transform:scaleX(1.0360);transform-origin:left;">Max</div>
<div class="t" style="left:1285.00px;top:431.29px;font-size:17.5px;line-height:17.5px;color:#fff;transform:scaleX(1.0452);transform-origin:left;">Force= 163N</div>
<div class="t" style="left:1285.00px;top:453.79px;font-size:17.5px;line-height:17.5px;color:#fff;transform:scaleX(1.0564);transform-origin:left;">Displacement= 0.686mm</div>
<svg style="left:660px;top:840px" width="16" height="18" viewBox="0 0 16 18"><path d="M0.4 9.5 L14.2 1.7 V17.3 Z" fill="#fff"/></svg>
<svg style="left:2036px;top:840px" width="16" height="18" viewBox="0 0 16 18"><path d="M13 9.2 L0.9 0.8 V17.1 Z" fill="#fff"/></svg>
<svg style="left:2070px;top:281px" width="52" height="42" viewBox="2070 281 52 42">
<rect x="2074.5" y="285.5" width="41.6" height="32.5" rx="3.5" fill="#c8ddf4" stroke="#1b4a7e" stroke-width="3"/>
<path d="M2074.5 289 Q2074.5 285.5 2078 285.5 H2086.5 V294 H2074.5 Z" fill="#1b4a7e"/>
<path d="M2086.5 285.5V318M2104.1 285.5V318" stroke="#1b4a7e" stroke-width="1.6"/>
<path d="M2074.5 294H2116M2074.5 301.8H2116M2074.5 310H2116" stroke="#1b4a7e" stroke-width="1.6"/>
</svg>
<div class="t" style="left:2150.50px;top:297.16px;font-size:16px;line-height:16px;color:#222;transform:scaleX(0.9437);transform-origin:left;">Selection Data</div>
<div class="a" style="left:2266px;top:285px;width:269px;height:37px;background:#fff;border:1px solid #9aa8b8;"></div>
<div class="a" style="left:2514px;top:286px;width:21px;height:35px;background:#1b4a7e;"></div>
<svg style="left:2518px;top:299px" width="13" height="9" viewBox="0 0 13 9"><path d="M1.5 1.5H11.5L6.5 7.5Z" fill="#fff"/></svg>
<div class="t" style="left:2270.30px;top:297.16px;font-size:16px;line-height:16px;color:#e8803a;transform:scaleX(0.9410);transform-origin:left;">data_000</div>
<div class="a" style="left:2064px;top:333px;width:461px;height:24px;background:#2d2d2d;"></div>
<div class="a" style="left:2072.5px;top:343.5px;width:7px;height:1.3px;background:#e8e8e8;"></div>
<div class="t" style="left:2089.20px;top:339.36px;font-size:16px;line-height:16px;font-weight:700;color:#fff;">Record Information</div>
<div class="a" style="left:2074px;top:369px;width:184px;height:30px;background:#6b6b6b;"></div>
<div class="t" style="left:2077.80px;top:377.06px;font-size:16px;line-height:16px;color:#f4f4f4;transform:scaleX(0.9720);transform-origin:left;">Graph Format</div>
<div class="a" style="left:2264px;top:369px;width:186px;height:30px;background:#fff;border:1px solid #7a7a7a;"></div>
<div class="t" style="left:2293.75px;top:377.06px;font-size:16px;line-height:16px;color:#1a1a1a;transform:scaleX(0.9550);transform-origin:right;">Force - Displacement</div>
<div class="a" style="left:2074px;top:403px;width:184px;height:64px;background:#6b6b6b;"></div>
<div class="t" style="left:2077.80px;top:429.06px;font-size:16px;line-height:16px;color:#f4f4f4;transform:scaleX(0.9587);transform-origin:left;">Date Time</div>
<div class="a" style="left:2264px;top:403px;width:186px;height:29.5px;background:#fff;border:1px solid #7a7a7a;"></div>
<div class="t" style="left:2365.12px;top:410.86px;font-size:16px;line-height:16px;color:#1a1a1a;transform:scaleX(1.0377);transform-origin:right;">2023/09/14</div>
<div class="a" style="left:2264px;top:438px;width:186px;height:29.5px;background:#fff;border:1px solid #7a7a7a;"></div>
<div class="t" style="left:2383.52px;top:445.76px;font-size:16px;line-height:16px;color:#1a1a1a;transform:scaleX(0.9634);transform-origin:right;">10:45:29</div>
<div class="a" style="left:2074px;top:471px;width:184px;height:29.5px;background:#6b6b6b;"></div>
<div class="t" style="left:2077.80px;top:478.66px;font-size:16px;line-height:16px;color:#f4f4f4;transform:scaleX(0.9819);transform-origin:left;">Operator</div>
<div class="a" style="left:2264px;top:471px;width:186px;height:29.5px;background:#fff;border:1px solid #7a7a7a;"></div>
<div class="t" style="left:2435.14px;top:478.66px;font-size:16px;line-height:16px;color:#1a1a1a;transform:scaleX(0.9200);transform-origin:right;">--</div>
<div class="a" style="left:2074px;top:505px;width:184px;height:64.5px;background:#6b6b6b;"></div>
<div class="t" style="left:2077.80px;top:530.06px;font-size:16px;line-height:16px;color:#f4f4f4;transform:scaleX(0.9263);transform-origin:left;">Force Gauge</div>
<div class="a" style="left:2265px;top:505px;width:186px;height:29.5px;background:#fff;border:1px solid #7a7a7a;"></div>
<div class="t" style="left:2435.14px;top:510.36px;font-size:16px;line-height:16px;color:#1a1a1a;transform:scaleX(0.9200);transform-origin:right;">--</div>
<div class="a" style="left:2264px;top:540px;width:186px;height:29.5px;background:#fff;border:1px solid #7a7a7a;"></div>
<div class="t" style="left:2435.14px;top:545.46px;font-size:16px;line-height:16px;color:#1a1a1a;transform:scaleX(0.9200);transform-origin:right;">--</div>
<div class="a" style="left:2074px;top:574px;width:184px;height:30px;background:#6b6b6b;"></div>
<div class="t" style="left:2077.80px;top:581.56px;font-size:16px;line-height:16px;color:#f4f4f4;transform:scaleX(0.9307);transform-origin:left;">Record Rate</div>
<div class="a" style="left:2264px;top:574px;width:186px;height:30px;background:#fff;border:1px solid #7a7a7a;"></div>
<div class="t" style="left:2396.86px;top:581.56px;font-size:16px;line-height:16px;color:#1a1a1a;transform:scaleX(0.9706);transform-origin:right;">0.0005</div>
<div class="t" style="left:2453.10px;top:581.56px;font-size:16px;line-height:16px;color:#1a1a1a;transform:scaleX(0.8715);transform-origin:left;">sec</div>
<div class="a" style="left:2074px;top:610px;width:184px;height:29.5px;background:#6b6b6b;"></div>
<div class="t" style="left:2077.80px;top:615.36px;font-size:16px;line-height:16px;color:#f4f4f4;transform:scaleX(0.9637);transform-origin:left;">Data Count</div>
<div class="a" style="left:2264px;top:610px;width:185px;height:29.5px;background:#fff;border:1px solid #7a7a7a;"></div>
<div class="t" style="left:2408.31px;top:618.06px;font-size:16px;line-height:16px;color:#1a1a1a;transform:scaleX(0.9412);transform-origin:right;">1000</div>
<div class="a" style="left:2064px;top:653px;width:461px;height:24px;background:#2d2d2d;"></div>
<div class="a" style="left:2072.5px;top:663.5px;width:7px;height:1.3px;background:#e8e8e8;"></div>
<div class="t" style="left:2089.20px;top:659.36px;font-size:16px;line-height:16px;font-weight:700;color:#fff;transform:scaleX(0.9527);transform-origin:left;">Statistics1</div>
<div class="a" style="left:2074px;top:689px;width:150px;height:65px;background:#6b6b6b;"></div>
<div class="t" style="left:2077.80px;top:715.06px;font-size:16px;line-height:16px;color:#f4f4f4;transform:scaleX(0.9511);transform-origin:left;">Max</div>
<div class="a" style="left:2229px;top:689px;width:30px;height:30px;background:#1b4a7e;"></div>
<div class="t" style="left:2239.36px;top:697.06px;font-size:16px;line-height:16px;color:#fff;">F</div>
<div class="a" style="left:2229px;top:724px;width:30px;height:30px;background:#1b4a7e;"></div>
<div class="t" style="left:2238.47px;top:732.06px;font-size:16px;line-height:16px;color:#fff;">D</div>
<div class="a" style="left:2264px;top:689px;width:150px;height:30px;background:#fff;border:1px solid #7a7a7a;"></div>
<div class="t" style="left:2382.05px;top:697.06px;font-size:16px;line-height:16px;color:#1a1a1a;transform:scaleX(0.9200);transform-origin:right;">102</div>
<div class="a" style="left:2264px;top:724px;width:150px;height:30px;background:#fff;border:1px solid #7a7a7a;"></div>
<div class="t" style="left:2368.71px;top:732.06px;font-size:16px;line-height:16px;color:#1a1a1a;transform:scaleX(0.9366);transform-origin:right;">5.806</div>
<div class="t" style="left:2419.50px;top:697.06px;font-size:16px;line-height:16px;color:#1a1a1a;">N</div>
<div class="t" style="left:2419.50px;top:732.06px;font-size:16px;line-height:16px;color:#1a1a1a;transform:scaleX(1.0035);transform-origin:left;">mm</div>
<div class="a" style="left:2074px;top:759px;width:150px;height:65px;background:#6b6b6b;"></div>
<div class="t" style="left:2077.80px;top:785.06px;font-size:16px;line-height:16px;color:#f4f4f4;transform:scaleX(1.0473);transform-origin:left;">Min</div>
<div class="a" style="left:2229px;top:759px;width:30px;height:30px;background:#1b4a7e;"></div>
<div class="t" style="left:2239.36px;top:767.06px;font-size:16px;line-height:16px;color:#fff;">F</div>
<div class="a" style="left:2229px;top:794px;width:30px;height:30px;background:#1b4a7e;"></div>
<div class="t" style="left:2238.47px;top:802.06px;font-size:16px;line-height:16px;color:#fff;">D</div>
<div class="a" style="left:2264px;top:759px;width:150px;height:30px;background:#fff;border:1px solid #7a7a7a;"></div>
<div class="t" style="left:2390.95px;top:767.06px;font-size:16px;line-height:16px;color:#1a1a1a;transform:scaleX(0.9200);transform-origin:right;">68</div>
<div class="a" style="left:2264px;top:794px;width:150px;height:30px;background:#fff;border:1px solid #7a7a7a;"></div>
<div class="t" style="left:2368.71px;top:802.06px;font-size:16px;line-height:16px;color:#1a1a1a;transform:scaleX(0.9366);transform-origin:right;">9.981</div>
<div class="t" style="left:2419.50px;top:767.06px;font-size:16px;line-height:16px;color:#1a1a1a;">N</div>
<div class="t" style="left:2419.50px;top:802.06px;font-size:16px;line-height:16px;color:#1a1a1a;transform:scaleX(1.0035);transform-origin:left;">mm</div>
<div class="a" style="left:2074px;top:829px;width:150px;height:30px;background:#6b6b6b;"></div>
<div class="t" style="left:2077.80px;top:834.06px;font-size:16px;line-height:16px;color:#f4f4f4;transform:scaleX(0.9569);transform-origin:left;">Average</div>
<div class="a" style="left:2229px;top:829px;width:30px;height:30px;background:#1b4a7e;"></div>
<div class="t" style="left:2239.36px;top:837.06px;font-size:16px;line-height:16px;color:#fff;">F</div>
<div class="a" style="left:2264px;top:829px;width:150px;height:30px;background:#fff;border:1px solid #7a7a7a;"></div>
<div class="t" style="left:2377.61px;top:837.06px;font-size:16px;line-height:16px;color:#1a1a1a;transform:scaleX(0.9634);transform-origin:right;">87.4</div>
<div class="t" style="left:2419.50px;top:837.06px;font-size:16px;line-height:16px;color:#1a1a1a;">N</div>
<div class="a" style="left:2064px;top:873px;width:461px;height:24px;background:#2d2d2d;"></div>
<div class="a" style="left:2072.5px;top:883.5px;width:7px;height:1.3px;background:#e8e8e8;"></div>
<div class="t" style="left:2089.20px;top:879.36px;font-size:16px;line-height:16px;font-weight:700;color:#fff;transform:scaleX(0.9589);transform-origin:left;">Statistics2</div>
<div class="a" style="left:2074px;top:909px;width:150px;height:30px;background:#6b6b6b;"></div>
<div class="t" style="left:2077.80px;top:917.06px;font-size:16px;line-height:16px;color:#f4f4f4;transform:scaleX(0.9593);transform-origin:left;">Threshold</div>
<div class="a" style="left:2229px;top:909px;width:30px;height:30px;background:#1b4a7e;"></div>
<div class="t" style="left:2239.36px;top:917.06px;font-size:16px;line-height:16px;color:#fff;">F</div>
<div class="a" style="left:2264px;top:909px;width:150px;height:30px;background:#a8ff2c;border:1px solid #7a7a7a;"></div>
<div class="t" style="left:2399.85px;top:917.06px;font-size:16px;line-height:16px;color:#1a1a1a;transform:scaleX(0.9200);transform-origin:right;">3</div>
<div class="t" style="left:2426.25px;top:917.06px;font-size:16px;line-height:16px;color:#1a1a1a;">N</div>
<div class="a" style="left:2074px;top:944px;width:150px;height:65px;background:#6b6b6b;"></div>
<div class="t" style="left:2077.80px;top:969.56px;font-size:16px;line-height:16px;color:#f4f4f4;transform:scaleX(0.9236);transform-origin:left;">1st Peak</div>
<div class="a" style="left:2229px;top:944px;width:30px;height:30px;background:#1b4a7e;"></div>
<div class="t" style="left:2239.36px;top:952.06px;font-size:16px;line-height:16px;color:#fff;">F</div>
<div class="a" style="left:2229px;top:979px;width:30px;height:30px;background:#1b4a7e;"></div>
<div class="t" style="left:2238.47px;top:987.06px;font-size:16px;line-height:16px;color:#fff;">D</div>
<div class="a" style="left:2264px;top:944px;width:150px;height:30px;background:#fff;border:1px solid #7a7a7a;"></div>
<div class="t" style="left:2382.05px;top:952.06px;font-size:16px;line-height:16px;color:#1a1a1a;transform:scaleX(0.9200);transform-origin:right;">102</div>
<div class="a" style="left:2264px;top:979px;width:150px;height:30px;background:#fff;border:1px solid #7a7a7a;"></div>
<div class="t" style="left:2368.71px;top:987.06px;font-size:16px;line-height:16px;color:#1a1a1a;transform:scaleX(0.9366);transform-origin:right;">5.806</div>
<div class="t" style="left:2426.25px;top:952.06px;font-size:16px;line-height:16px;color:#1a1a1a;">N</div>
<div class="t" style="left:2426.25px;top:987.06px;font-size:16px;line-height:16px;color:#1a1a1a;transform:scaleX(1.0035);transform-origin:left;">mm</div>
<div class="a" style="left:2074px;top:1014px;width:150px;height:65px;background:#6b6b6b;"></div>
<div class="t" style="left:2077.80px;top:1039.56px;font-size:16px;line-height:16px;color:#f4f4f4;transform:scaleX(0.9466);transform-origin:left;">2nd Peak</div>
<div class="a" style="left:2229px;top:1014px;width:30px;height:30px;background:#1b4a7e;"></div>
<div class="t" style="left:2239.36px;top:1022.36px;font-size:16px;line-height:16px;color:#fff;">F</div>
<div class="a" style="left:2229px;top:1049px;width:30px;height:30px;background:#1b4a7e;"></div>
<div class="t" style="left:2238.47px;top:1056.76px;font-size:16px;line-height:16px;color:#fff;">D</div>
<div class="a" style="left:2264px;top:1014px;width:150px;height:30px;background:#fff;border:1px solid #7a7a7a;"></div>
<div class="t" style="left:2390.95px;top:1022.36px;font-size:16px;line-height:16px;color:#1a1a1a;transform:scaleX(0.9200);transform-origin:right;">97</div>
<div class="a" style="left:2264px;top:1049px;width:150px;height:30px;background:#fff;border:1px solid #7a7a7a;"></div>
<div class="t" style="left:2368.71px;top:1056.76px;font-size:16px;line-height:16px;color:#1a1a1a;transform:scaleX(0.9366);transform-origin:right;">6.675</div>
<div class="t" style="left:2426.25px;top:1022.36px;font-size:16px;line-height:16px;color:#1a1a1a;">N</div>
<div class="t" style="left:2426.25px;top:1056.76px;font-size:16px;line-height:16px;color:#1a1a1a;transform:scaleX(1.0035);transform-origin:left;">mm</div>
<div class="a" style="left:2074px;top:1085px;width:150px;height:65px;background:#6b6b6b;"></div>
<div class="t" style="left:2077.80px;top:1110.81px;font-size:16px;line-height:16px;color:#f4f4f4;transform:scaleX(0.9827);transform-origin:left;">Mark Point ON</div>
<div class="a" style="left:2229px;top:1085px;width:30px;height:30px;background:#1b4a7e;"></div>
<div class="t" style="left:2239.36px;top:1091.06px;font-size:16px;line-height:16px;color:#fff;">F</div>
<div class="a" style="left:2229px;top:1120px;width:30px;height:30px;background:#1b4a7e;"></div>
<div class="t" style="left:2238.47px;top:1126.46px;font-size:16px;line-height:16px;color:#fff;">D</div>
<div class="a" style="left:2264px;top:1085px;width:150px;height:30px;background:#fff;border:1px solid #7a7a7a;"></div>
<div class="t" style="left:2399.34px;top:1091.06px;font-size:16px;line-height:16px;color:#1a1a1a;transform:scaleX(0.9200);transform-origin:right;">--</div>
<div class="a" style="left:2264px;top:1120px;width:150px;height:30px;background:#fff;border:1px solid #7a7a7a;"></div>
<div class="t" style="left:2399.34px;top:1126.46px;font-size:16px;line-height:16px;color:#1a1a1a;transform:scaleX(0.9200);transform-origin:right;">--</div>
<div class="t" style="left:2426.25px;top:1091.06px;font-size:16px;line-height:16px;color:#1a1a1a;transform:scaleX(1.1026);transform-origin:left;">--</div>
<div class="t" style="left:2426.25px;top:1126.46px;font-size:16px;line-height:16px;color:#1a1a1a;transform:scaleX(1.1026);transform-origin:left;">--</div>
<div class="a" style="left:2074px;top:1157px;width:150px;height:65px;background:#6b6b6b;"></div>
<div class="t" style="left:2077.80px;top:1182.66px;font-size:16px;line-height:16px;color:#f4f4f4;transform:scaleX(0.9495);transform-origin:left;">Mark Point OFF</div>
<div class="a" style="left:2229px;top:1157px;width:30px;height:30px;background:#1b4a7e;"></div>
<div class="t" style="left:2239.36px;top:1163.06px;font-size:16px;line-height:16px;color:#fff;">F</div>
<div class="a" style="left:2229px;top:1192px;width:30px;height:30px;background:#1b4a7e;"></div>
<div class="t" style="left:2238.47px;top:1197.36px;font-size:16px;line-height:16px;color:#fff;">D</div>
<div class="a" style="left:2264px;top:1157px;width:150px;height:30px;background:#fff;border:1px solid #7a7a7a;"></div>
<div class="t" style="left:2399.34px;top:1163.06px;font-size:16px;line-height:16px;color:#1a1a1a;transform:scaleX(0.9200);transform-origin:right;">--</div>
<div class="a" style="left:2264px;top:1192px;width:150px;height:30px;background:#fff;border:1px solid #7a7a7a;"></div>
<div class="t" style="left:2399.34px;top:1197.36px;font-size:16px;line-height:16px;color:#1a1a1a;transform:scaleX(0.9200);transform-origin:right;">--</div>
<div class="t" style="left:2426.25px;top:1163.06px;font-size:16px;line-height:16px;color:#1a1a1a;transform:scaleX(1.1026);transform-origin:left;">--</div>
<div class="t" style="left:2426.25px;top:1197.36px;font-size:16px;line-height:16px;color:#1a1a1a;transform:scaleX(1.1026);transform-origin:left;">--</div>
<div class="a" style="left:2064px;top:1235px;width:461px;height:24px;background:#2d2d2d;"></div>
<div class="a" style="left:2072.5px;top:1245.5px;width:7px;height:1.3px;background:#e8e8e8;"></div>
<div class="t" style="left:2089.20px;top:1241.36px;font-size:16px;line-height:16px;font-weight:700;color:#fff;transform:scaleX(1.0165);transform-origin:left;">Comment</div>
<div class="a" style="left:2064px;top:1260px;width:461px;height:168px;background:#fff;border:1px solid #8a8a8a;border-top:2px solid #555;border-bottom:none;"></div>
<div class="t" style="left:2067.80px;top:1269.54px;font-size:17.5px;line-height:17.5px;color:#1a1a1a;transform:scaleX(0.9688);transform-origin:left;">Test date</div>
<div class="t" style="left:2142.57px;top:1269.54px;font-size:17.5px;line-height:17.5px;color:#1a1a1a;">:</div>
<div class="t" style="left:2154.70px;top:1269.54px;font-size:17.5px;line-height:17.5px;color:#1a1a1a;transform:scaleX(0.9711);transform-origin:left;">14/9/2023</div>
<div class="t" style="left:2067.80px;top:1297.69px;font-size:17.5px;line-height:17.5px;color:#1a1a1a;transform:scaleX(0.9863);transform-origin:left;">Temperature</div>
<div class="t" style="left:2170.57px;top:1297.69px;font-size:17.5px;line-height:17.5px;color:#1a1a1a;">:</div>
<div class="t" style="left:2181.90px;top:1297.69px;font-size:17.5px;line-height:17.5px;color:#1a1a1a;transform:scaleX(0.8785);transform-origin:left;">23°C</div>
<div class="t" style="left:2067.80px;top:1325.79px;font-size:17.5px;line-height:17.5px;color:#1a1a1a;">Humidity</div>
<div class="t" style="left:2141.97px;top:1325.79px;font-size:17.5px;line-height:17.5px;color:#1a1a1a;">:</div>
<div class="t" style="left:2153.00px;top:1325.79px;font-size:17.5px;line-height:17.5px;color:#1a1a1a;transform:scaleX(0.8965);transform-origin:left;">60%</div>
<div class="a" style="left:2525px;top:333px;width:23px;height:766px;background:#a3a3a3;"></div>
<div class="a" style="left:2525px;top:1099px;width:23px;height:329px;background:#c4c4c4;"></div>
<svg style="left:2528px;top:338px" width="17" height="14" viewBox="0 0 17 14"><path d="M2.5 11 L8.5 4 L14.5 11" fill="none" stroke="#fff" stroke-width="3"/></svg>
<svg style="left:2528px;top:1405px" width="17" height="14" viewBox="0 0 17 14"><path d="M2.5 3 L8.5 10 L14.5 3" fill="none" stroke="#fff" stroke-width="3"/></svg>
</body></html>
